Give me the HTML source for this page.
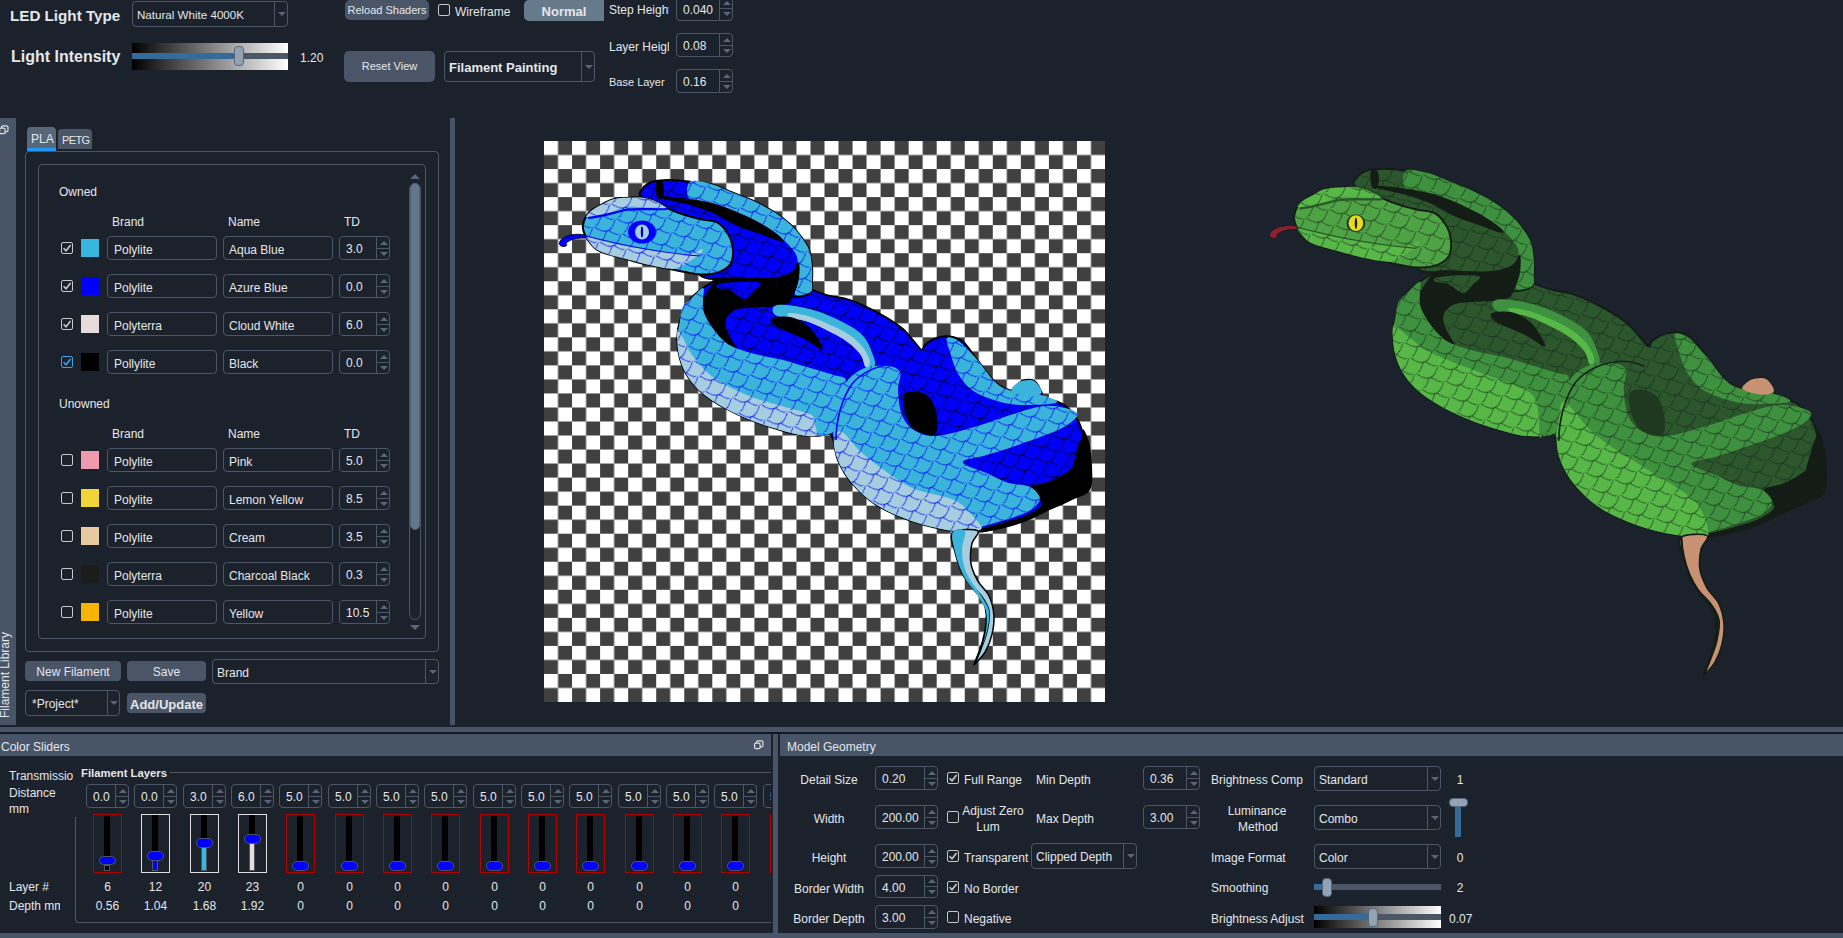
<!DOCTYPE html><html><head><meta charset="utf-8"><style>
html,body{margin:0;padding:0;}
body{width:1843px;height:938px;overflow:hidden;background:#1b222c;position:relative;font-family:"Liberation Sans",sans-serif;}
.a{position:absolute;}
.t{position:absolute;height:0;white-space:nowrap;line-height:0;}
.t span{position:absolute;left:0;bottom:0;line-height:1;display:block;transform:translateY(0.215em);}
.t.c span{left:0;right:0;text-align:center;}
</style></head><body>
<div class="t" style="left:10px;top:20px;font-size:15.2px;font-weight:700;color:#e4e6ea;"><span>LED Light Type</span></div>
<div class="a" style="left:132px;top:1px;width:156px;height:26px;border:1px solid #4b5667;border-radius:4px;box-sizing:border-box"></div>
<div class="a" style="left:274px;top:2px;width:1px;height:24px;background:#4b5667"></div>
<div class="a" style="left:277.5px;top:12.0px;width:0;height:0;border-left:4.0px solid transparent;border-right:4.0px solid transparent;border-top:4px solid #5a6677"></div>
<div class="t" style="left:137px;top:18.176000000000002px;font-size:11.6px;font-weight:400;color:#e4e6ea;"><span>Natural White 4000K</span></div>
<div class="t" style="left:11px;top:62px;font-size:16px;font-weight:700;color:#e4e6ea;"><span>Light Intensity</span></div>
<div class="a" style="left:132px;top:43px;width:156px;height:27px;background:linear-gradient(90deg,#000,#fff)"></div>
<div class="a" style="left:132px;top:53px;width:106px;height:6px;background:#346b9b"></div>
<div class="a" style="left:238px;top:53px;width:50px;height:6px;background:#4b5667"></div>
<div class="a" style="left:234px;top:46px;width:10px;height:20px;background:#93a3b4;border:1px solid #56677a;border-radius:4px;box-sizing:border-box"></div>
<div class="t" style="left:300px;top:61px;font-size:12px;font-weight:400;color:#e4e6ea;"><span>1.20</span></div>
<div class="a" style="left:345px;top:0px;width:84px;height:20px;background:#4a5568;border-radius:5px"></div>
<div class="t c" style="left:287.0px;top:13.96px;width:200px;font-size:11px;font-weight:400;color:#e4e6ea;"><span>Reload Shaders</span></div>
<div class="a" style="left:438px;top:4px;width:12px;height:12px;border:1.3px solid #c8c8c8;border-radius:2px;box-sizing:border-box"></div>
<div class="t" style="left:455px;top:15px;font-size:12px;font-weight:400;color:#e4e6ea;"><span>Wireframe</span></div>
<div class="a" style="left:524px;top:0px;width:80px;height:21px;background:#677a8c;border-radius:5px"></div>
<div class="t c" style="left:464.0px;top:15.18px;width:200px;font-size:13px;font-weight:700;color:#e4e6ea;"><span>Normal</span></div>
<div class="a" style="left:600px;top:0px;width:4px;height:21px;background:#677a8c"></div>
<div class="a" style="left:609px;top:0;width:60px;height:100px;overflow:hidden">
<div class="t" style="left:0px;top:13px;font-size:12px;font-weight:400;color:#e4e6ea;"><span>Step Height</span></div>
<div class="t" style="left:0px;top:49.5px;font-size:12px;font-weight:400;color:#e4e6ea;"><span>Layer Height</span></div>
<div class="t" style="left:0px;top:85.7px;font-size:11px;font-weight:400;color:#e4e6ea;"><span>Base Layer</span></div>
</div>
<div class="a" style="left:676px;top:-4px;width:57px;height:24.5px;border:1px solid #4b5667;border-radius:4px;box-sizing:border-box"></div>
<div class="a" style="left:719px;top:-3px;width:1px;height:22.5px;background:#4b5667"></div>
<div class="a" style="left:720px;top:7.75px;width:12px;height:1.0px;background:#4b5667"></div>
<div class="a" style="left:722.5px;top:0.625px;width:0;height:0;border-left:4.0px solid transparent;border-right:4.0px solid transparent;border-bottom:4px solid #5a6677"></div>
<div class="a" style="left:722.5px;top:11.875px;width:0;height:0;border-left:4.0px solid transparent;border-right:4.0px solid transparent;border-top:4px solid #5a6677"></div>
<div class="t" style="left:683px;top:13.3px;font-size:12px;font-weight:400;color:#e4e6ea;"><span>0.040</span></div>
<div class="a" style="left:676px;top:33px;width:57px;height:24px;border:1px solid #4b5667;border-radius:4px;box-sizing:border-box"></div>
<div class="a" style="left:719px;top:34px;width:1px;height:22px;background:#4b5667"></div>
<div class="a" style="left:720px;top:44.5px;width:12px;height:1.0px;background:#4b5667"></div>
<div class="a" style="left:722.5px;top:37.5px;width:0;height:0;border-left:4.0px solid transparent;border-right:4.0px solid transparent;border-bottom:4px solid #5a6677"></div>
<div class="a" style="left:722.5px;top:48.5px;width:0;height:0;border-left:4.0px solid transparent;border-right:4.0px solid transparent;border-top:4px solid #5a6677"></div>
<div class="t" style="left:683px;top:49.32px;font-size:12px;font-weight:400;color:#e4e6ea;"><span>0.08</span></div>
<div class="a" style="left:676px;top:69px;width:57px;height:24px;border:1px solid #4b5667;border-radius:4px;box-sizing:border-box"></div>
<div class="a" style="left:719px;top:70px;width:1px;height:22px;background:#4b5667"></div>
<div class="a" style="left:720px;top:80.5px;width:12px;height:1.0px;background:#4b5667"></div>
<div class="a" style="left:722.5px;top:73.5px;width:0;height:0;border-left:4.0px solid transparent;border-right:4.0px solid transparent;border-bottom:4px solid #5a6677"></div>
<div class="a" style="left:722.5px;top:84.5px;width:0;height:0;border-left:4.0px solid transparent;border-right:4.0px solid transparent;border-top:4px solid #5a6677"></div>
<div class="t" style="left:683px;top:85.32px;font-size:12px;font-weight:400;color:#e4e6ea;"><span>0.16</span></div>
<div class="a" style="left:344px;top:51px;width:91px;height:31px;background:#4a5568;border-radius:5px"></div>
<div class="t c" style="left:289.5px;top:70.46px;width:200px;font-size:11px;font-weight:400;color:#e4e6ea;"><span>Reset View</span></div>
<div class="a" style="left:444px;top:51px;width:151px;height:31px;border:1px solid #4b5667;border-radius:4px;box-sizing:border-box"></div>
<div class="a" style="left:581px;top:52px;width:1px;height:29px;background:#4b5667"></div>
<div class="a" style="left:584.5px;top:64.5px;width:0;height:0;border-left:4.0px solid transparent;border-right:4.0px solid transparent;border-top:4px solid #5a6677"></div>
<div class="t" style="left:449px;top:71.18px;font-size:13px;font-weight:700;color:#e4e6ea;"><span>Filament Painting</span></div>
<div class="a" style="left:0px;top:118px;width:16px;height:607px;background:#485467"></div>
<svg class="a" style="left:-1px;top:125px" width="10" height="10" viewBox="0 0 10 10"><rect x="2.5" y="0.8" width="6.5" height="6" rx="1.5" fill="none" stroke="#e0e0e0" stroke-width="1.2"/><rect x="0.6" y="3.2" width="5.5" height="5.5" rx="1.2" fill="#485467" stroke="#e0e0e0" stroke-width="1.2"/></svg>
<div class="a" style="left:-2px;top:718px;transform-origin:0 0;transform:rotate(-90deg);font-size:12px;color:#e4e6ea;white-space:nowrap;line-height:14px">Filament Library</div>
<div class="a" style="left:450px;top:118px;width:5px;height:607px;background:#485467"></div>
<div class="a" style="left:27px;top:127px;width:29px;height:24px;background:#566878;border-radius:4px 4px 0 0"></div>
<div class="a" style="left:27px;top:148px;width:29px;height:3px;background:#2196f3"></div>
<div class="t" style="left:31px;top:142px;font-size:12px;font-weight:400;color:#e4e6ea;"><span>PLA</span></div>
<div class="a" style="left:58px;top:129px;width:34px;height:20px;background:#4a5566;border-radius:4px 4px 0 0"></div>
<div class="t" style="left:62px;top:144px;font-size:11px;font-weight:400;color:#e4e6ea;letter-spacing:-0.6px"><span>PETG</span></div>
<div class="a" style="left:25px;top:151px;width:414px;height:501px;border:1px solid #4b5667;border-radius:4px;box-sizing:border-box"></div>
<div class="a" style="left:38px;top:164px;width:388px;height:475px;border:1px solid #4b5667;border-radius:4px;box-sizing:border-box"></div>
<div class="a" style="left:410.0px;top:174.0px;width:0;height:0;border-left:5.0px solid transparent;border-right:5.0px solid transparent;border-bottom:5px solid #5a6677"></div>
<div class="a" style="left:409px;top:183px;width:12px;height:437px;border:1px solid #4b5667;border-radius:6px;box-sizing:border-box"></div>
<div class="a" style="left:410px;top:183px;width:10px;height:347px;background:#627789;border-radius:5px;border:1px solid #4f6070;box-sizing:border-box"></div>
<div class="a" style="left:410.0px;top:624.5px;width:0;height:0;border-left:5.0px solid transparent;border-right:5.0px solid transparent;border-top:5px solid #5a6677"></div>
<div class="t" style="left:59px;top:195px;font-size:12px;font-weight:400;color:#e4e6ea;"><span>Owned</span></div>
<div class="t" style="left:59px;top:407px;font-size:12px;font-weight:400;color:#e4e6ea;"><span>Unowned</span></div>
<div class="t" style="left:112px;top:225px;font-size:12px;font-weight:400;color:#e4e6ea;"><span>Brand</span></div>
<div class="t" style="left:228px;top:225px;font-size:12px;font-weight:400;color:#e4e6ea;"><span>Name</span></div>
<div class="t" style="left:344px;top:225px;font-size:12px;font-weight:400;color:#e4e6ea;"><span>TD</span></div>
<div class="t" style="left:112px;top:437px;font-size:12px;font-weight:400;color:#e4e6ea;"><span>Brand</span></div>
<div class="t" style="left:228px;top:437px;font-size:12px;font-weight:400;color:#e4e6ea;"><span>Name</span></div>
<div class="t" style="left:344px;top:437px;font-size:12px;font-weight:400;color:#e4e6ea;"><span>TD</span></div>
<div class="a" style="left:61px;top:242px;width:12px;height:12px;border:1.3px solid #c8c8c8;border-radius:2px;box-sizing:border-box"></div>
<svg class="a" style="left:61px;top:242px" width="12" height="12" viewBox="0 0 12 12"><path d="M2.6 6.2 L5 8.8 L9.6 3" fill="none" stroke="#c8c8c8" stroke-width="1.6"/></svg>
<div class="a" style="left:81px;top:239px;width:18px;height:18px;background:#38b6dd"></div>
<div class="a" style="left:107px;top:236px;width:110px;height:24px;border:1px solid #4b5667;border-radius:4px;box-sizing:border-box"></div>
<div class="t" style="left:114px;top:252.5px;font-size:12px;font-weight:400;color:#e4e6ea;"><span>Polylite</span></div>
<div class="a" style="left:223px;top:236px;width:110px;height:24px;border:1px solid #4b5667;border-radius:4px;box-sizing:border-box"></div>
<div class="t" style="left:229px;top:252.5px;font-size:12px;font-weight:400;color:#e4e6ea;"><span>Aqua Blue</span></div>
<div class="a" style="left:339px;top:236px;width:51px;height:24px;border:1px solid #4b5667;border-radius:4px;box-sizing:border-box"></div>
<div class="a" style="left:376px;top:237px;width:1px;height:22px;background:#4b5667"></div>
<div class="a" style="left:377px;top:247.5px;width:12px;height:1.0px;background:#4b5667"></div>
<div class="a" style="left:379.5px;top:240.5px;width:0;height:0;border-left:4.0px solid transparent;border-right:4.0px solid transparent;border-bottom:4px solid #5a6677"></div>
<div class="a" style="left:379.5px;top:251.5px;width:0;height:0;border-left:4.0px solid transparent;border-right:4.0px solid transparent;border-top:4px solid #5a6677"></div>
<div class="t" style="left:346px;top:252.32px;font-size:12px;font-weight:400;color:#e4e6ea;"><span>3.0</span></div>
<div class="a" style="left:61px;top:280px;width:12px;height:12px;border:1.3px solid #c8c8c8;border-radius:2px;box-sizing:border-box"></div>
<svg class="a" style="left:61px;top:280px" width="12" height="12" viewBox="0 0 12 12"><path d="M2.6 6.2 L5 8.8 L9.6 3" fill="none" stroke="#c8c8c8" stroke-width="1.6"/></svg>
<div class="a" style="left:81px;top:277px;width:18px;height:18px;background:#0000ff"></div>
<div class="a" style="left:107px;top:274px;width:110px;height:24px;border:1px solid #4b5667;border-radius:4px;box-sizing:border-box"></div>
<div class="t" style="left:114px;top:290.5px;font-size:12px;font-weight:400;color:#e4e6ea;"><span>Polylite</span></div>
<div class="a" style="left:223px;top:274px;width:110px;height:24px;border:1px solid #4b5667;border-radius:4px;box-sizing:border-box"></div>
<div class="t" style="left:229px;top:290.5px;font-size:12px;font-weight:400;color:#e4e6ea;"><span>Azure Blue</span></div>
<div class="a" style="left:339px;top:274px;width:51px;height:24px;border:1px solid #4b5667;border-radius:4px;box-sizing:border-box"></div>
<div class="a" style="left:376px;top:275px;width:1px;height:22px;background:#4b5667"></div>
<div class="a" style="left:377px;top:285.5px;width:12px;height:1.0px;background:#4b5667"></div>
<div class="a" style="left:379.5px;top:278.5px;width:0;height:0;border-left:4.0px solid transparent;border-right:4.0px solid transparent;border-bottom:4px solid #5a6677"></div>
<div class="a" style="left:379.5px;top:289.5px;width:0;height:0;border-left:4.0px solid transparent;border-right:4.0px solid transparent;border-top:4px solid #5a6677"></div>
<div class="t" style="left:346px;top:290.32px;font-size:12px;font-weight:400;color:#e4e6ea;"><span>0.0</span></div>
<div class="a" style="left:61px;top:318px;width:12px;height:12px;border:1.3px solid #c8c8c8;border-radius:2px;box-sizing:border-box"></div>
<svg class="a" style="left:61px;top:318px" width="12" height="12" viewBox="0 0 12 12"><path d="M2.6 6.2 L5 8.8 L9.6 3" fill="none" stroke="#c8c8c8" stroke-width="1.6"/></svg>
<div class="a" style="left:81px;top:315px;width:18px;height:18px;background:#e8dcdb"></div>
<div class="a" style="left:107px;top:312px;width:110px;height:24px;border:1px solid #4b5667;border-radius:4px;box-sizing:border-box"></div>
<div class="t" style="left:114px;top:328.5px;font-size:12px;font-weight:400;color:#e4e6ea;"><span>Polyterra</span></div>
<div class="a" style="left:223px;top:312px;width:110px;height:24px;border:1px solid #4b5667;border-radius:4px;box-sizing:border-box"></div>
<div class="t" style="left:229px;top:328.5px;font-size:12px;font-weight:400;color:#e4e6ea;"><span>Cloud White</span></div>
<div class="a" style="left:339px;top:312px;width:51px;height:24px;border:1px solid #4b5667;border-radius:4px;box-sizing:border-box"></div>
<div class="a" style="left:376px;top:313px;width:1px;height:22px;background:#4b5667"></div>
<div class="a" style="left:377px;top:323.5px;width:12px;height:1.0px;background:#4b5667"></div>
<div class="a" style="left:379.5px;top:316.5px;width:0;height:0;border-left:4.0px solid transparent;border-right:4.0px solid transparent;border-bottom:4px solid #5a6677"></div>
<div class="a" style="left:379.5px;top:327.5px;width:0;height:0;border-left:4.0px solid transparent;border-right:4.0px solid transparent;border-top:4px solid #5a6677"></div>
<div class="t" style="left:346px;top:328.32px;font-size:12px;font-weight:400;color:#e4e6ea;"><span>6.0</span></div>
<div class="a" style="left:61px;top:356px;width:12px;height:12px;border:1.3px solid #3aa0e8;border-radius:2px;box-sizing:border-box"></div>
<svg class="a" style="left:61px;top:356px" width="12" height="12" viewBox="0 0 12 12"><path d="M2.6 6.2 L5 8.8 L9.6 3" fill="none" stroke="#3aa0e8" stroke-width="1.6"/></svg>
<div class="a" style="left:81px;top:353px;width:18px;height:18px;background:#000000"></div>
<div class="a" style="left:107px;top:350px;width:110px;height:24px;border:1px solid #4b5667;border-radius:4px;box-sizing:border-box"></div>
<div class="t" style="left:114px;top:366.5px;font-size:12px;font-weight:400;color:#e4e6ea;"><span>Pollylite</span></div>
<div class="a" style="left:223px;top:350px;width:110px;height:24px;border:1px solid #4b5667;border-radius:4px;box-sizing:border-box"></div>
<div class="t" style="left:229px;top:366.5px;font-size:12px;font-weight:400;color:#e4e6ea;"><span>Black</span></div>
<div class="a" style="left:339px;top:350px;width:51px;height:24px;border:1px solid #4b5667;border-radius:4px;box-sizing:border-box"></div>
<div class="a" style="left:376px;top:351px;width:1px;height:22px;background:#4b5667"></div>
<div class="a" style="left:377px;top:361.5px;width:12px;height:1.0px;background:#4b5667"></div>
<div class="a" style="left:379.5px;top:354.5px;width:0;height:0;border-left:4.0px solid transparent;border-right:4.0px solid transparent;border-bottom:4px solid #5a6677"></div>
<div class="a" style="left:379.5px;top:365.5px;width:0;height:0;border-left:4.0px solid transparent;border-right:4.0px solid transparent;border-top:4px solid #5a6677"></div>
<div class="t" style="left:346px;top:366.32px;font-size:12px;font-weight:400;color:#e4e6ea;"><span>0.0</span></div>
<div class="a" style="left:61px;top:454px;width:12px;height:12px;border:1.3px solid #c8c8c8;border-radius:2px;box-sizing:border-box"></div>
<div class="a" style="left:81px;top:451px;width:18px;height:18px;background:#f09ab0"></div>
<div class="a" style="left:107px;top:448px;width:110px;height:24px;border:1px solid #4b5667;border-radius:4px;box-sizing:border-box"></div>
<div class="t" style="left:114px;top:464.5px;font-size:12px;font-weight:400;color:#e4e6ea;"><span>Polylite</span></div>
<div class="a" style="left:223px;top:448px;width:110px;height:24px;border:1px solid #4b5667;border-radius:4px;box-sizing:border-box"></div>
<div class="t" style="left:229px;top:464.5px;font-size:12px;font-weight:400;color:#e4e6ea;"><span>Pink</span></div>
<div class="a" style="left:339px;top:448px;width:51px;height:24px;border:1px solid #4b5667;border-radius:4px;box-sizing:border-box"></div>
<div class="a" style="left:376px;top:449px;width:1px;height:22px;background:#4b5667"></div>
<div class="a" style="left:377px;top:459.5px;width:12px;height:1.0px;background:#4b5667"></div>
<div class="a" style="left:379.5px;top:452.5px;width:0;height:0;border-left:4.0px solid transparent;border-right:4.0px solid transparent;border-bottom:4px solid #5a6677"></div>
<div class="a" style="left:379.5px;top:463.5px;width:0;height:0;border-left:4.0px solid transparent;border-right:4.0px solid transparent;border-top:4px solid #5a6677"></div>
<div class="t" style="left:346px;top:464.32px;font-size:12px;font-weight:400;color:#e4e6ea;"><span>5.0</span></div>
<div class="a" style="left:61px;top:492px;width:12px;height:12px;border:1.3px solid #c8c8c8;border-radius:2px;box-sizing:border-box"></div>
<div class="a" style="left:81px;top:489px;width:18px;height:18px;background:#f3d33a"></div>
<div class="a" style="left:107px;top:486px;width:110px;height:24px;border:1px solid #4b5667;border-radius:4px;box-sizing:border-box"></div>
<div class="t" style="left:114px;top:502.5px;font-size:12px;font-weight:400;color:#e4e6ea;"><span>Polylite</span></div>
<div class="a" style="left:223px;top:486px;width:110px;height:24px;border:1px solid #4b5667;border-radius:4px;box-sizing:border-box"></div>
<div class="t" style="left:229px;top:502.5px;font-size:12px;font-weight:400;color:#e4e6ea;"><span>Lemon Yellow</span></div>
<div class="a" style="left:339px;top:486px;width:51px;height:24px;border:1px solid #4b5667;border-radius:4px;box-sizing:border-box"></div>
<div class="a" style="left:376px;top:487px;width:1px;height:22px;background:#4b5667"></div>
<div class="a" style="left:377px;top:497.5px;width:12px;height:1.0px;background:#4b5667"></div>
<div class="a" style="left:379.5px;top:490.5px;width:0;height:0;border-left:4.0px solid transparent;border-right:4.0px solid transparent;border-bottom:4px solid #5a6677"></div>
<div class="a" style="left:379.5px;top:501.5px;width:0;height:0;border-left:4.0px solid transparent;border-right:4.0px solid transparent;border-top:4px solid #5a6677"></div>
<div class="t" style="left:346px;top:502.32px;font-size:12px;font-weight:400;color:#e4e6ea;"><span>8.5</span></div>
<div class="a" style="left:61px;top:530px;width:12px;height:12px;border:1.3px solid #c8c8c8;border-radius:2px;box-sizing:border-box"></div>
<div class="a" style="left:81px;top:527px;width:18px;height:18px;background:#e8c9a0"></div>
<div class="a" style="left:107px;top:524px;width:110px;height:24px;border:1px solid #4b5667;border-radius:4px;box-sizing:border-box"></div>
<div class="t" style="left:114px;top:540.5px;font-size:12px;font-weight:400;color:#e4e6ea;"><span>Polylite</span></div>
<div class="a" style="left:223px;top:524px;width:110px;height:24px;border:1px solid #4b5667;border-radius:4px;box-sizing:border-box"></div>
<div class="t" style="left:229px;top:540.5px;font-size:12px;font-weight:400;color:#e4e6ea;"><span>Cream</span></div>
<div class="a" style="left:339px;top:524px;width:51px;height:24px;border:1px solid #4b5667;border-radius:4px;box-sizing:border-box"></div>
<div class="a" style="left:376px;top:525px;width:1px;height:22px;background:#4b5667"></div>
<div class="a" style="left:377px;top:535.5px;width:12px;height:1.0px;background:#4b5667"></div>
<div class="a" style="left:379.5px;top:528.5px;width:0;height:0;border-left:4.0px solid transparent;border-right:4.0px solid transparent;border-bottom:4px solid #5a6677"></div>
<div class="a" style="left:379.5px;top:539.5px;width:0;height:0;border-left:4.0px solid transparent;border-right:4.0px solid transparent;border-top:4px solid #5a6677"></div>
<div class="t" style="left:346px;top:540.32px;font-size:12px;font-weight:400;color:#e4e6ea;"><span>3.5</span></div>
<div class="a" style="left:61px;top:568px;width:12px;height:12px;border:1.3px solid #c8c8c8;border-radius:2px;box-sizing:border-box"></div>
<div class="a" style="left:81px;top:565px;width:18px;height:18px;background:#1c1c1c"></div>
<div class="a" style="left:107px;top:562px;width:110px;height:24px;border:1px solid #4b5667;border-radius:4px;box-sizing:border-box"></div>
<div class="t" style="left:114px;top:578.5px;font-size:12px;font-weight:400;color:#e4e6ea;"><span>Polyterra</span></div>
<div class="a" style="left:223px;top:562px;width:110px;height:24px;border:1px solid #4b5667;border-radius:4px;box-sizing:border-box"></div>
<div class="t" style="left:229px;top:578.5px;font-size:12px;font-weight:400;color:#e4e6ea;"><span>Charcoal Black</span></div>
<div class="a" style="left:339px;top:562px;width:51px;height:24px;border:1px solid #4b5667;border-radius:4px;box-sizing:border-box"></div>
<div class="a" style="left:376px;top:563px;width:1px;height:22px;background:#4b5667"></div>
<div class="a" style="left:377px;top:573.5px;width:12px;height:1.0px;background:#4b5667"></div>
<div class="a" style="left:379.5px;top:566.5px;width:0;height:0;border-left:4.0px solid transparent;border-right:4.0px solid transparent;border-bottom:4px solid #5a6677"></div>
<div class="a" style="left:379.5px;top:577.5px;width:0;height:0;border-left:4.0px solid transparent;border-right:4.0px solid transparent;border-top:4px solid #5a6677"></div>
<div class="t" style="left:346px;top:578.32px;font-size:12px;font-weight:400;color:#e4e6ea;"><span>0.3</span></div>
<div class="a" style="left:61px;top:606px;width:12px;height:12px;border:1.3px solid #c8c8c8;border-radius:2px;box-sizing:border-box"></div>
<div class="a" style="left:81px;top:603px;width:18px;height:18px;background:#f5b400"></div>
<div class="a" style="left:107px;top:600px;width:110px;height:24px;border:1px solid #4b5667;border-radius:4px;box-sizing:border-box"></div>
<div class="t" style="left:114px;top:616.5px;font-size:12px;font-weight:400;color:#e4e6ea;"><span>Polylite</span></div>
<div class="a" style="left:223px;top:600px;width:110px;height:24px;border:1px solid #4b5667;border-radius:4px;box-sizing:border-box"></div>
<div class="t" style="left:229px;top:616.5px;font-size:12px;font-weight:400;color:#e4e6ea;"><span>Yellow</span></div>
<div class="a" style="left:339px;top:600px;width:51px;height:24px;border:1px solid #4b5667;border-radius:4px;box-sizing:border-box"></div>
<div class="a" style="left:376px;top:601px;width:1px;height:22px;background:#4b5667"></div>
<div class="a" style="left:377px;top:611.5px;width:12px;height:1.0px;background:#4b5667"></div>
<div class="a" style="left:379.5px;top:604.5px;width:0;height:0;border-left:4.0px solid transparent;border-right:4.0px solid transparent;border-bottom:4px solid #5a6677"></div>
<div class="a" style="left:379.5px;top:615.5px;width:0;height:0;border-left:4.0px solid transparent;border-right:4.0px solid transparent;border-top:4px solid #5a6677"></div>
<div class="t" style="left:346px;top:616.32px;font-size:12px;font-weight:400;color:#e4e6ea;"><span>10.5</span></div>
<div class="a" style="left:25px;top:661px;width:96px;height:20px;background:#4a5568;border-radius:4px"></div>
<div class="t c" style="left:-27.0px;top:675.32px;width:200px;font-size:12px;font-weight:400;color:#e4e6ea;"><span>New Filament</span></div>
<div class="a" style="left:127px;top:661px;width:79px;height:20px;background:#4a5568;border-radius:4px"></div>
<div class="t c" style="left:66.5px;top:675.32px;width:200px;font-size:12px;font-weight:400;color:#e4e6ea;"><span>Save</span></div>
<div class="a" style="left:212px;top:659px;width:227px;height:25px;border:1px solid #4b5667;border-radius:4px;box-sizing:border-box"></div>
<div class="a" style="left:425px;top:660px;width:1px;height:23px;background:#4b5667"></div>
<div class="a" style="left:428.5px;top:669.5px;width:0;height:0;border-left:4.0px solid transparent;border-right:4.0px solid transparent;border-top:4px solid #5a6677"></div>
<div class="t" style="left:217px;top:675.82px;font-size:12px;font-weight:400;color:#e4e6ea;"><span>Brand</span></div>
<div class="a" style="left:25px;top:690px;width:95px;height:26px;border:1px solid #4b5667;border-radius:4px;box-sizing:border-box"></div>
<div class="a" style="left:107px;top:691px;width:1px;height:24px;background:#4b5667"></div>
<div class="a" style="left:110.0px;top:701.0px;width:0;height:0;border-left:4.0px solid transparent;border-right:4.0px solid transparent;border-top:4px solid #5a6677"></div>
<div class="t" style="left:32px;top:707.32px;font-size:12px;font-weight:400;color:#e4e6ea;"><span>*Project*</span></div>
<div class="a" style="left:127px;top:693px;width:79px;height:20px;background:#4a5568;border-radius:4px"></div>
<div class="t c" style="left:66.5px;top:707.68px;width:200px;font-size:13px;font-weight:700;color:#e4e6ea;"><span>Add/Update</span></div>
<div class="a" style="left:0px;top:727px;width:1843px;height:5px;background:#485467"></div>
<div class="a" style="left:0px;top:732px;width:1843px;height:2px;background:#141a22"></div>
<div class="a" style="left:0px;top:734px;width:771px;height:22px;background:#485467"></div>
<div class="a" style="left:773px;top:734px;width:5px;height:204px;background:#485467"></div>
<div class="a" style="left:780px;top:734px;width:1063px;height:22px;background:#485467"></div>
<div class="a" style="left:0px;top:933px;width:1843px;height:5px;background:#485467"></div>
<div class="t" style="left:1px;top:750px;font-size:12px;font-weight:400;color:#e4e6ea;"><span>Color Sliders</span></div>
<div class="t" style="left:787px;top:750px;font-size:12px;font-weight:400;color:#e4e6ea;"><span>Model Geometry</span></div>
<svg class="a" style="left:754px;top:740px" width="10" height="10" viewBox="0 0 10 10"><rect x="2.5" y="0.8" width="6.5" height="6" rx="1.5" fill="none" stroke="#e0e0e0" stroke-width="1.2"/><rect x="0.6" y="3.2" width="5.5" height="5.5" rx="1.2" fill="#485467" stroke="#e0e0e0" stroke-width="1.2"/></svg>
<div class="a" style="left:0;top:756px;width:73px;height:60px;overflow:hidden">
<div class="t" style="left:9px;top:23.4px;font-size:12px;font-weight:400;color:#e4e6ea;"><span>Transmission</span></div>
<div class="t" style="left:9px;top:39.6px;font-size:12px;font-weight:400;color:#e4e6ea;"><span>Distance</span></div>
<div class="t" style="left:9px;top:55.6px;font-size:12px;font-weight:400;color:#e4e6ea;"><span>mm</span></div>
</div>
<div class="a" style="left:0;top:870px;width:60px;height:60px;overflow:hidden">
<div class="t" style="left:9px;top:19.6px;font-size:12px;font-weight:400;color:#e4e6ea;"><span>Layer #</span></div>
<div class="t" style="left:9px;top:39px;font-size:12px;font-weight:400;color:#e4e6ea;"><span>Depth mm</span></div>
</div>
<div class="a" style="left:75px;top:772px;width:696px;height:151px;border:1px solid #4b5667;border-right:none;border-radius:4px 0 0 4px;box-sizing:border-box"></div>
<div class="a" style="left:74px;top:765px;width:96px;height:15px;background:#1b222c"></div>
<div class="a" style="left:74px;top:765px;width:2px;height:52px;background:#1b222c"></div>
<div class="t" style="left:81px;top:777px;font-size:11.3px;font-weight:700;color:#e4e6ea;"><span>Filament Layers</span></div>
<div class="a" style="left:0;top:756px;width:771px;height:177px;overflow:hidden">
<div class="a" style="left:86px;top:28px;width:43px;height:24px;border:1px solid #4b5667;border-radius:4px;box-sizing:border-box"></div>
<div class="a" style="left:115px;top:29px;width:1px;height:22px;background:#4b5667"></div>
<div class="a" style="left:116px;top:39.5px;width:12px;height:1.0px;background:#4b5667"></div>
<div class="a" style="left:118.5px;top:32.5px;width:0;height:0;border-left:4.0px solid transparent;border-right:4.0px solid transparent;border-bottom:4px solid #5a6677"></div>
<div class="a" style="left:118.5px;top:43.5px;width:0;height:0;border-left:4.0px solid transparent;border-right:4.0px solid transparent;border-top:4px solid #5a6677"></div>
<div class="t" style="left:93px;top:44.32px;font-size:12px;font-weight:400;color:#e4e6ea;"><span>0.0</span></div>
<div class="a" style="left:93px;top:58px;width:29px;height:59px;border:1.3px solid #b00000;box-sizing:border-box"></div>
<div class="a" style="left:104px;top:59px;width:6px;height:56px;background:#000"></div>
<div class="a" style="left:104px;top:108.5px;width:6px;height:6.5px;background:#000;border:1px solid #4b5667;box-sizing:border-box"></div>
<div class="a" style="left:98.5px;top:99.5px;width:17.5px;height:9.5px;background:#0000ff;border:1px solid #4b5667;border-radius:5px;box-sizing:border-box"></div>
<div class="t c" style="left:7.5px;top:133.79999999999995px;width:200px;font-size:12px;font-weight:400;color:#e4e6ea;"><span>6</span></div>
<div class="t c" style="left:7.5px;top:152.5px;width:200px;font-size:12px;font-weight:400;color:#e4e6ea;"><span>0.56</span></div>
<div class="a" style="left:134px;top:28px;width:43px;height:24px;border:1px solid #4b5667;border-radius:4px;box-sizing:border-box"></div>
<div class="a" style="left:163px;top:29px;width:1px;height:22px;background:#4b5667"></div>
<div class="a" style="left:164px;top:39.5px;width:12px;height:1.0px;background:#4b5667"></div>
<div class="a" style="left:166.5px;top:32.5px;width:0;height:0;border-left:4.0px solid transparent;border-right:4.0px solid transparent;border-bottom:4px solid #5a6677"></div>
<div class="a" style="left:166.5px;top:43.5px;width:0;height:0;border-left:4.0px solid transparent;border-right:4.0px solid transparent;border-top:4px solid #5a6677"></div>
<div class="t" style="left:141px;top:44.32px;font-size:12px;font-weight:400;color:#e4e6ea;"><span>0.0</span></div>
<div class="a" style="left:141px;top:58px;width:29px;height:59px;border:1.3px solid #e0e0e0;box-sizing:border-box"></div>
<div class="a" style="left:152px;top:59px;width:6px;height:56px;background:#000"></div>
<div class="a" style="left:152px;top:104px;width:6px;height:11px;background:#0000ff;border:1px solid #4b5667;box-sizing:border-box"></div>
<div class="a" style="left:146.5px;top:95px;width:17.5px;height:9.5px;background:#0000ff;border:1px solid #4b5667;border-radius:5px;box-sizing:border-box"></div>
<div class="t c" style="left:55.5px;top:133.79999999999995px;width:200px;font-size:12px;font-weight:400;color:#e4e6ea;"><span>12</span></div>
<div class="t c" style="left:55.5px;top:152.5px;width:200px;font-size:12px;font-weight:400;color:#e4e6ea;"><span>1.04</span></div>
<div class="a" style="left:183px;top:28px;width:43px;height:24px;border:1px solid #4b5667;border-radius:4px;box-sizing:border-box"></div>
<div class="a" style="left:212px;top:29px;width:1px;height:22px;background:#4b5667"></div>
<div class="a" style="left:213px;top:39.5px;width:12px;height:1.0px;background:#4b5667"></div>
<div class="a" style="left:215.5px;top:32.5px;width:0;height:0;border-left:4.0px solid transparent;border-right:4.0px solid transparent;border-bottom:4px solid #5a6677"></div>
<div class="a" style="left:215.5px;top:43.5px;width:0;height:0;border-left:4.0px solid transparent;border-right:4.0px solid transparent;border-top:4px solid #5a6677"></div>
<div class="t" style="left:190px;top:44.32px;font-size:12px;font-weight:400;color:#e4e6ea;"><span>3.0</span></div>
<div class="a" style="left:190px;top:58px;width:29px;height:59px;border:1.3px solid #e0e0e0;box-sizing:border-box"></div>
<div class="a" style="left:201px;top:59px;width:6px;height:56px;background:#000"></div>
<div class="a" style="left:201px;top:91px;width:6px;height:24px;background:#38b6dd;border:1px solid #4b5667;box-sizing:border-box"></div>
<div class="a" style="left:195.5px;top:82px;width:17.5px;height:9.5px;background:#0000ff;border:1px solid #4b5667;border-radius:5px;box-sizing:border-box"></div>
<div class="t c" style="left:104.5px;top:133.79999999999995px;width:200px;font-size:12px;font-weight:400;color:#e4e6ea;"><span>20</span></div>
<div class="t c" style="left:104.5px;top:152.5px;width:200px;font-size:12px;font-weight:400;color:#e4e6ea;"><span>1.68</span></div>
<div class="a" style="left:231px;top:28px;width:43px;height:24px;border:1px solid #4b5667;border-radius:4px;box-sizing:border-box"></div>
<div class="a" style="left:260px;top:29px;width:1px;height:22px;background:#4b5667"></div>
<div class="a" style="left:261px;top:39.5px;width:12px;height:1.0px;background:#4b5667"></div>
<div class="a" style="left:263.5px;top:32.5px;width:0;height:0;border-left:4.0px solid transparent;border-right:4.0px solid transparent;border-bottom:4px solid #5a6677"></div>
<div class="a" style="left:263.5px;top:43.5px;width:0;height:0;border-left:4.0px solid transparent;border-right:4.0px solid transparent;border-top:4px solid #5a6677"></div>
<div class="t" style="left:238px;top:44.32px;font-size:12px;font-weight:400;color:#e4e6ea;"><span>6.0</span></div>
<div class="a" style="left:238px;top:58px;width:29px;height:59px;border:1.3px solid #e0e0e0;box-sizing:border-box"></div>
<div class="a" style="left:249px;top:59px;width:6px;height:56px;background:#000"></div>
<div class="a" style="left:249px;top:87.39999999999998px;width:6px;height:27.600000000000023px;background:#e8dcdb;border:1px solid #4b5667;box-sizing:border-box"></div>
<div class="a" style="left:243.5px;top:78.39999999999998px;width:17.5px;height:9.5px;background:#0000ff;border:1px solid #4b5667;border-radius:5px;box-sizing:border-box"></div>
<div class="t c" style="left:152.5px;top:133.79999999999995px;width:200px;font-size:12px;font-weight:400;color:#e4e6ea;"><span>23</span></div>
<div class="t c" style="left:152.5px;top:152.5px;width:200px;font-size:12px;font-weight:400;color:#e4e6ea;"><span>1.92</span></div>
<div class="a" style="left:279px;top:28px;width:43px;height:24px;border:1px solid #4b5667;border-radius:4px;box-sizing:border-box"></div>
<div class="a" style="left:308px;top:29px;width:1px;height:22px;background:#4b5667"></div>
<div class="a" style="left:309px;top:39.5px;width:12px;height:1.0px;background:#4b5667"></div>
<div class="a" style="left:311.5px;top:32.5px;width:0;height:0;border-left:4.0px solid transparent;border-right:4.0px solid transparent;border-bottom:4px solid #5a6677"></div>
<div class="a" style="left:311.5px;top:43.5px;width:0;height:0;border-left:4.0px solid transparent;border-right:4.0px solid transparent;border-top:4px solid #5a6677"></div>
<div class="t" style="left:286px;top:44.32px;font-size:12px;font-weight:400;color:#e4e6ea;"><span>5.0</span></div>
<div class="a" style="left:286px;top:58px;width:29px;height:59px;border:1.3px solid #b00000;box-sizing:border-box"></div>
<div class="a" style="left:297px;top:59px;width:6px;height:56px;background:#000"></div>
<div class="a" style="left:291.5px;top:105px;width:17.5px;height:9.5px;background:#0000ff;border:1px solid #4b5667;border-radius:5px;box-sizing:border-box"></div>
<div class="t c" style="left:200.5px;top:133.79999999999995px;width:200px;font-size:12px;font-weight:400;color:#e4e6ea;"><span>0</span></div>
<div class="t c" style="left:200.5px;top:152.5px;width:200px;font-size:12px;font-weight:400;color:#e4e6ea;"><span>0</span></div>
<div class="a" style="left:328px;top:28px;width:43px;height:24px;border:1px solid #4b5667;border-radius:4px;box-sizing:border-box"></div>
<div class="a" style="left:357px;top:29px;width:1px;height:22px;background:#4b5667"></div>
<div class="a" style="left:358px;top:39.5px;width:12px;height:1.0px;background:#4b5667"></div>
<div class="a" style="left:360.5px;top:32.5px;width:0;height:0;border-left:4.0px solid transparent;border-right:4.0px solid transparent;border-bottom:4px solid #5a6677"></div>
<div class="a" style="left:360.5px;top:43.5px;width:0;height:0;border-left:4.0px solid transparent;border-right:4.0px solid transparent;border-top:4px solid #5a6677"></div>
<div class="t" style="left:335px;top:44.32px;font-size:12px;font-weight:400;color:#e4e6ea;"><span>5.0</span></div>
<div class="a" style="left:335px;top:58px;width:29px;height:59px;border:1.3px solid #b00000;box-sizing:border-box"></div>
<div class="a" style="left:346px;top:59px;width:6px;height:56px;background:#000"></div>
<div class="a" style="left:340.5px;top:105px;width:17.5px;height:9.5px;background:#0000ff;border:1px solid #4b5667;border-radius:5px;box-sizing:border-box"></div>
<div class="t c" style="left:249.5px;top:133.79999999999995px;width:200px;font-size:12px;font-weight:400;color:#e4e6ea;"><span>0</span></div>
<div class="t c" style="left:249.5px;top:152.5px;width:200px;font-size:12px;font-weight:400;color:#e4e6ea;"><span>0</span></div>
<div class="a" style="left:376px;top:28px;width:43px;height:24px;border:1px solid #4b5667;border-radius:4px;box-sizing:border-box"></div>
<div class="a" style="left:405px;top:29px;width:1px;height:22px;background:#4b5667"></div>
<div class="a" style="left:406px;top:39.5px;width:12px;height:1.0px;background:#4b5667"></div>
<div class="a" style="left:408.5px;top:32.5px;width:0;height:0;border-left:4.0px solid transparent;border-right:4.0px solid transparent;border-bottom:4px solid #5a6677"></div>
<div class="a" style="left:408.5px;top:43.5px;width:0;height:0;border-left:4.0px solid transparent;border-right:4.0px solid transparent;border-top:4px solid #5a6677"></div>
<div class="t" style="left:383px;top:44.32px;font-size:12px;font-weight:400;color:#e4e6ea;"><span>5.0</span></div>
<div class="a" style="left:383px;top:58px;width:29px;height:59px;border:1.3px solid #b00000;box-sizing:border-box"></div>
<div class="a" style="left:394px;top:59px;width:6px;height:56px;background:#000"></div>
<div class="a" style="left:388.5px;top:105px;width:17.5px;height:9.5px;background:#0000ff;border:1px solid #4b5667;border-radius:5px;box-sizing:border-box"></div>
<div class="t c" style="left:297.5px;top:133.79999999999995px;width:200px;font-size:12px;font-weight:400;color:#e4e6ea;"><span>0</span></div>
<div class="t c" style="left:297.5px;top:152.5px;width:200px;font-size:12px;font-weight:400;color:#e4e6ea;"><span>0</span></div>
<div class="a" style="left:424px;top:28px;width:43px;height:24px;border:1px solid #4b5667;border-radius:4px;box-sizing:border-box"></div>
<div class="a" style="left:453px;top:29px;width:1px;height:22px;background:#4b5667"></div>
<div class="a" style="left:454px;top:39.5px;width:12px;height:1.0px;background:#4b5667"></div>
<div class="a" style="left:456.5px;top:32.5px;width:0;height:0;border-left:4.0px solid transparent;border-right:4.0px solid transparent;border-bottom:4px solid #5a6677"></div>
<div class="a" style="left:456.5px;top:43.5px;width:0;height:0;border-left:4.0px solid transparent;border-right:4.0px solid transparent;border-top:4px solid #5a6677"></div>
<div class="t" style="left:431px;top:44.32px;font-size:12px;font-weight:400;color:#e4e6ea;"><span>5.0</span></div>
<div class="a" style="left:431px;top:58px;width:29px;height:59px;border:1.3px solid #b00000;box-sizing:border-box"></div>
<div class="a" style="left:442px;top:59px;width:6px;height:56px;background:#000"></div>
<div class="a" style="left:436.5px;top:105px;width:17.5px;height:9.5px;background:#0000ff;border:1px solid #4b5667;border-radius:5px;box-sizing:border-box"></div>
<div class="t c" style="left:345.5px;top:133.79999999999995px;width:200px;font-size:12px;font-weight:400;color:#e4e6ea;"><span>0</span></div>
<div class="t c" style="left:345.5px;top:152.5px;width:200px;font-size:12px;font-weight:400;color:#e4e6ea;"><span>0</span></div>
<div class="a" style="left:473px;top:28px;width:43px;height:24px;border:1px solid #4b5667;border-radius:4px;box-sizing:border-box"></div>
<div class="a" style="left:502px;top:29px;width:1px;height:22px;background:#4b5667"></div>
<div class="a" style="left:503px;top:39.5px;width:12px;height:1.0px;background:#4b5667"></div>
<div class="a" style="left:505.5px;top:32.5px;width:0;height:0;border-left:4.0px solid transparent;border-right:4.0px solid transparent;border-bottom:4px solid #5a6677"></div>
<div class="a" style="left:505.5px;top:43.5px;width:0;height:0;border-left:4.0px solid transparent;border-right:4.0px solid transparent;border-top:4px solid #5a6677"></div>
<div class="t" style="left:480px;top:44.32px;font-size:12px;font-weight:400;color:#e4e6ea;"><span>5.0</span></div>
<div class="a" style="left:480px;top:58px;width:29px;height:59px;border:1.3px solid #b00000;box-sizing:border-box"></div>
<div class="a" style="left:491px;top:59px;width:6px;height:56px;background:#000"></div>
<div class="a" style="left:485.5px;top:105px;width:17.5px;height:9.5px;background:#0000ff;border:1px solid #4b5667;border-radius:5px;box-sizing:border-box"></div>
<div class="t c" style="left:394.5px;top:133.79999999999995px;width:200px;font-size:12px;font-weight:400;color:#e4e6ea;"><span>0</span></div>
<div class="t c" style="left:394.5px;top:152.5px;width:200px;font-size:12px;font-weight:400;color:#e4e6ea;"><span>0</span></div>
<div class="a" style="left:521px;top:28px;width:43px;height:24px;border:1px solid #4b5667;border-radius:4px;box-sizing:border-box"></div>
<div class="a" style="left:550px;top:29px;width:1px;height:22px;background:#4b5667"></div>
<div class="a" style="left:551px;top:39.5px;width:12px;height:1.0px;background:#4b5667"></div>
<div class="a" style="left:553.5px;top:32.5px;width:0;height:0;border-left:4.0px solid transparent;border-right:4.0px solid transparent;border-bottom:4px solid #5a6677"></div>
<div class="a" style="left:553.5px;top:43.5px;width:0;height:0;border-left:4.0px solid transparent;border-right:4.0px solid transparent;border-top:4px solid #5a6677"></div>
<div class="t" style="left:528px;top:44.32px;font-size:12px;font-weight:400;color:#e4e6ea;"><span>5.0</span></div>
<div class="a" style="left:528px;top:58px;width:29px;height:59px;border:1.3px solid #b00000;box-sizing:border-box"></div>
<div class="a" style="left:539px;top:59px;width:6px;height:56px;background:#000"></div>
<div class="a" style="left:533.5px;top:105px;width:17.5px;height:9.5px;background:#0000ff;border:1px solid #4b5667;border-radius:5px;box-sizing:border-box"></div>
<div class="t c" style="left:442.5px;top:133.79999999999995px;width:200px;font-size:12px;font-weight:400;color:#e4e6ea;"><span>0</span></div>
<div class="t c" style="left:442.5px;top:152.5px;width:200px;font-size:12px;font-weight:400;color:#e4e6ea;"><span>0</span></div>
<div class="a" style="left:569px;top:28px;width:43px;height:24px;border:1px solid #4b5667;border-radius:4px;box-sizing:border-box"></div>
<div class="a" style="left:598px;top:29px;width:1px;height:22px;background:#4b5667"></div>
<div class="a" style="left:599px;top:39.5px;width:12px;height:1.0px;background:#4b5667"></div>
<div class="a" style="left:601.5px;top:32.5px;width:0;height:0;border-left:4.0px solid transparent;border-right:4.0px solid transparent;border-bottom:4px solid #5a6677"></div>
<div class="a" style="left:601.5px;top:43.5px;width:0;height:0;border-left:4.0px solid transparent;border-right:4.0px solid transparent;border-top:4px solid #5a6677"></div>
<div class="t" style="left:576px;top:44.32px;font-size:12px;font-weight:400;color:#e4e6ea;"><span>5.0</span></div>
<div class="a" style="left:576px;top:58px;width:29px;height:59px;border:1.3px solid #b00000;box-sizing:border-box"></div>
<div class="a" style="left:587px;top:59px;width:6px;height:56px;background:#000"></div>
<div class="a" style="left:581.5px;top:105px;width:17.5px;height:9.5px;background:#0000ff;border:1px solid #4b5667;border-radius:5px;box-sizing:border-box"></div>
<div class="t c" style="left:490.5px;top:133.79999999999995px;width:200px;font-size:12px;font-weight:400;color:#e4e6ea;"><span>0</span></div>
<div class="t c" style="left:490.5px;top:152.5px;width:200px;font-size:12px;font-weight:400;color:#e4e6ea;"><span>0</span></div>
<div class="a" style="left:618px;top:28px;width:43px;height:24px;border:1px solid #4b5667;border-radius:4px;box-sizing:border-box"></div>
<div class="a" style="left:647px;top:29px;width:1px;height:22px;background:#4b5667"></div>
<div class="a" style="left:648px;top:39.5px;width:12px;height:1.0px;background:#4b5667"></div>
<div class="a" style="left:650.5px;top:32.5px;width:0;height:0;border-left:4.0px solid transparent;border-right:4.0px solid transparent;border-bottom:4px solid #5a6677"></div>
<div class="a" style="left:650.5px;top:43.5px;width:0;height:0;border-left:4.0px solid transparent;border-right:4.0px solid transparent;border-top:4px solid #5a6677"></div>
<div class="t" style="left:625px;top:44.32px;font-size:12px;font-weight:400;color:#e4e6ea;"><span>5.0</span></div>
<div class="a" style="left:625px;top:58px;width:29px;height:59px;border:1.3px solid #b00000;box-sizing:border-box"></div>
<div class="a" style="left:636px;top:59px;width:6px;height:56px;background:#000"></div>
<div class="a" style="left:630.5px;top:105px;width:17.5px;height:9.5px;background:#0000ff;border:1px solid #4b5667;border-radius:5px;box-sizing:border-box"></div>
<div class="t c" style="left:539.5px;top:133.79999999999995px;width:200px;font-size:12px;font-weight:400;color:#e4e6ea;"><span>0</span></div>
<div class="t c" style="left:539.5px;top:152.5px;width:200px;font-size:12px;font-weight:400;color:#e4e6ea;"><span>0</span></div>
<div class="a" style="left:666px;top:28px;width:43px;height:24px;border:1px solid #4b5667;border-radius:4px;box-sizing:border-box"></div>
<div class="a" style="left:695px;top:29px;width:1px;height:22px;background:#4b5667"></div>
<div class="a" style="left:696px;top:39.5px;width:12px;height:1.0px;background:#4b5667"></div>
<div class="a" style="left:698.5px;top:32.5px;width:0;height:0;border-left:4.0px solid transparent;border-right:4.0px solid transparent;border-bottom:4px solid #5a6677"></div>
<div class="a" style="left:698.5px;top:43.5px;width:0;height:0;border-left:4.0px solid transparent;border-right:4.0px solid transparent;border-top:4px solid #5a6677"></div>
<div class="t" style="left:673px;top:44.32px;font-size:12px;font-weight:400;color:#e4e6ea;"><span>5.0</span></div>
<div class="a" style="left:673px;top:58px;width:29px;height:59px;border:1.3px solid #b00000;box-sizing:border-box"></div>
<div class="a" style="left:684px;top:59px;width:6px;height:56px;background:#000"></div>
<div class="a" style="left:678.5px;top:105px;width:17.5px;height:9.5px;background:#0000ff;border:1px solid #4b5667;border-radius:5px;box-sizing:border-box"></div>
<div class="t c" style="left:587.5px;top:133.79999999999995px;width:200px;font-size:12px;font-weight:400;color:#e4e6ea;"><span>0</span></div>
<div class="t c" style="left:587.5px;top:152.5px;width:200px;font-size:12px;font-weight:400;color:#e4e6ea;"><span>0</span></div>
<div class="a" style="left:714px;top:28px;width:43px;height:24px;border:1px solid #4b5667;border-radius:4px;box-sizing:border-box"></div>
<div class="a" style="left:743px;top:29px;width:1px;height:22px;background:#4b5667"></div>
<div class="a" style="left:744px;top:39.5px;width:12px;height:1.0px;background:#4b5667"></div>
<div class="a" style="left:746.5px;top:32.5px;width:0;height:0;border-left:4.0px solid transparent;border-right:4.0px solid transparent;border-bottom:4px solid #5a6677"></div>
<div class="a" style="left:746.5px;top:43.5px;width:0;height:0;border-left:4.0px solid transparent;border-right:4.0px solid transparent;border-top:4px solid #5a6677"></div>
<div class="t" style="left:721px;top:44.32px;font-size:12px;font-weight:400;color:#e4e6ea;"><span>5.0</span></div>
<div class="a" style="left:721px;top:58px;width:29px;height:59px;border:1.3px solid #b00000;box-sizing:border-box"></div>
<div class="a" style="left:732px;top:59px;width:6px;height:56px;background:#000"></div>
<div class="a" style="left:726.5px;top:105px;width:17.5px;height:9.5px;background:#0000ff;border:1px solid #4b5667;border-radius:5px;box-sizing:border-box"></div>
<div class="t c" style="left:635.5px;top:133.79999999999995px;width:200px;font-size:12px;font-weight:400;color:#e4e6ea;"><span>0</span></div>
<div class="t c" style="left:635.5px;top:152.5px;width:200px;font-size:12px;font-weight:400;color:#e4e6ea;"><span>0</span></div>
<div class="a" style="left:763px;top:28px;width:43px;height:24px;border:1px solid #4b5667;border-radius:4px;box-sizing:border-box"></div>
<div class="a" style="left:792px;top:29px;width:1px;height:22px;background:#4b5667"></div>
<div class="a" style="left:793px;top:39.5px;width:12px;height:1.0px;background:#4b5667"></div>
<div class="a" style="left:795.5px;top:32.5px;width:0;height:0;border-left:4.0px solid transparent;border-right:4.0px solid transparent;border-bottom:4px solid #5a6677"></div>
<div class="a" style="left:795.5px;top:43.5px;width:0;height:0;border-left:4.0px solid transparent;border-right:4.0px solid transparent;border-top:4px solid #5a6677"></div>
<div class="t" style="left:770px;top:44.32px;font-size:12px;font-weight:400;color:#e4e6ea;"><span>5.0</span></div>
<div class="a" style="left:770px;top:58px;width:29px;height:59px;border:1.3px solid #b00000;box-sizing:border-box"></div>
<div class="a" style="left:781px;top:59px;width:6px;height:56px;background:#000"></div>
<div class="a" style="left:775.5px;top:105px;width:17.5px;height:9.5px;background:#0000ff;border:1px solid #4b5667;border-radius:5px;box-sizing:border-box"></div>
<div class="t c" style="left:684.5px;top:133.79999999999995px;width:200px;font-size:12px;font-weight:400;color:#e4e6ea;"><span>0</span></div>
<div class="t c" style="left:684.5px;top:152.5px;width:200px;font-size:12px;font-weight:400;color:#e4e6ea;"><span>0</span></div>
</div>
<div class="t c" style="left:729px;top:782.6px;width:200px;font-size:12px;font-weight:400;color:#e4e6ea;"><span>Detail Size</span></div>
<div class="a" style="left:875px;top:766px;width:63px;height:24px;border:1px solid #4b5667;border-radius:4px;box-sizing:border-box"></div>
<div class="a" style="left:924px;top:767px;width:1px;height:22px;background:#4b5667"></div>
<div class="a" style="left:925px;top:777.5px;width:12px;height:1.0px;background:#4b5667"></div>
<div class="a" style="left:927.5px;top:770.5px;width:0;height:0;border-left:4.0px solid transparent;border-right:4.0px solid transparent;border-bottom:4px solid #5a6677"></div>
<div class="a" style="left:927.5px;top:781.5px;width:0;height:0;border-left:4.0px solid transparent;border-right:4.0px solid transparent;border-top:4px solid #5a6677"></div>
<div class="t" style="left:882px;top:782.32px;font-size:12px;font-weight:400;color:#e4e6ea;"><span>0.20</span></div>
<div class="a" style="left:947px;top:772px;width:12px;height:12px;border:1.3px solid #c8c8c8;border-radius:2px;box-sizing:border-box"></div>
<svg class="a" style="left:947px;top:772px" width="12" height="12" viewBox="0 0 12 12"><path d="M2.6 6.2 L5 8.8 L9.6 3" fill="none" stroke="#c8c8c8" stroke-width="1.6"/></svg>
<div class="t" style="left:964px;top:782.6px;font-size:12px;font-weight:400;color:#e4e6ea;"><span>Full Range</span></div>
<div class="t c" style="left:729px;top:821.6px;width:200px;font-size:12px;font-weight:400;color:#e4e6ea;"><span>Width</span></div>
<div class="a" style="left:875px;top:805px;width:63px;height:24px;border:1px solid #4b5667;border-radius:4px;box-sizing:border-box"></div>
<div class="a" style="left:924px;top:806px;width:1px;height:22px;background:#4b5667"></div>
<div class="a" style="left:925px;top:816.5px;width:12px;height:1.0px;background:#4b5667"></div>
<div class="a" style="left:927.5px;top:809.5px;width:0;height:0;border-left:4.0px solid transparent;border-right:4.0px solid transparent;border-bottom:4px solid #5a6677"></div>
<div class="a" style="left:927.5px;top:820.5px;width:0;height:0;border-left:4.0px solid transparent;border-right:4.0px solid transparent;border-top:4px solid #5a6677"></div>
<div class="t" style="left:882px;top:821.32px;font-size:12px;font-weight:400;color:#e4e6ea;"><span>200.00</span></div>
<div class="a" style="left:947px;top:811px;width:12px;height:12px;border:1.3px solid #c8c8c8;border-radius:2px;box-sizing:border-box"></div>
<div class="t c" style="left:729px;top:860.6px;width:200px;font-size:12px;font-weight:400;color:#e4e6ea;"><span>Height</span></div>
<div class="a" style="left:875px;top:844px;width:63px;height:24px;border:1px solid #4b5667;border-radius:4px;box-sizing:border-box"></div>
<div class="a" style="left:924px;top:845px;width:1px;height:22px;background:#4b5667"></div>
<div class="a" style="left:925px;top:855.5px;width:12px;height:1.0px;background:#4b5667"></div>
<div class="a" style="left:927.5px;top:848.5px;width:0;height:0;border-left:4.0px solid transparent;border-right:4.0px solid transparent;border-bottom:4px solid #5a6677"></div>
<div class="a" style="left:927.5px;top:859.5px;width:0;height:0;border-left:4.0px solid transparent;border-right:4.0px solid transparent;border-top:4px solid #5a6677"></div>
<div class="t" style="left:882px;top:860.32px;font-size:12px;font-weight:400;color:#e4e6ea;"><span>200.00</span></div>
<div class="a" style="left:947px;top:850px;width:12px;height:12px;border:1.3px solid #c8c8c8;border-radius:2px;box-sizing:border-box"></div>
<svg class="a" style="left:947px;top:850px" width="12" height="12" viewBox="0 0 12 12"><path d="M2.6 6.2 L5 8.8 L9.6 3" fill="none" stroke="#c8c8c8" stroke-width="1.6"/></svg>
<div class="t" style="left:964px;top:860.6px;font-size:12px;font-weight:400;color:#e4e6ea;"><span>Transparent</span></div>
<div class="t c" style="left:729px;top:891.6px;width:200px;font-size:12px;font-weight:400;color:#e4e6ea;"><span>Border Width</span></div>
<div class="a" style="left:875px;top:875px;width:63px;height:23px;border:1px solid #4b5667;border-radius:4px;box-sizing:border-box"></div>
<div class="a" style="left:924px;top:876px;width:1px;height:21px;background:#4b5667"></div>
<div class="a" style="left:925px;top:886.0px;width:12px;height:1.0px;background:#4b5667"></div>
<div class="a" style="left:927.5px;top:879.25px;width:0;height:0;border-left:4.0px solid transparent;border-right:4.0px solid transparent;border-bottom:4px solid #5a6677"></div>
<div class="a" style="left:927.5px;top:889.75px;width:0;height:0;border-left:4.0px solid transparent;border-right:4.0px solid transparent;border-top:4px solid #5a6677"></div>
<div class="t" style="left:882px;top:890.82px;font-size:12px;font-weight:400;color:#e4e6ea;"><span>4.00</span></div>
<div class="a" style="left:947px;top:881px;width:12px;height:12px;border:1.3px solid #c8c8c8;border-radius:2px;box-sizing:border-box"></div>
<svg class="a" style="left:947px;top:881px" width="12" height="12" viewBox="0 0 12 12"><path d="M2.6 6.2 L5 8.8 L9.6 3" fill="none" stroke="#c8c8c8" stroke-width="1.6"/></svg>
<div class="t" style="left:964px;top:891.6px;font-size:12px;font-weight:400;color:#e4e6ea;"><span>No Border</span></div>
<div class="t c" style="left:729px;top:921.6px;width:200px;font-size:12px;font-weight:400;color:#e4e6ea;"><span>Border Depth</span></div>
<div class="a" style="left:875px;top:905px;width:63px;height:24px;border:1px solid #4b5667;border-radius:4px;box-sizing:border-box"></div>
<div class="a" style="left:924px;top:906px;width:1px;height:22px;background:#4b5667"></div>
<div class="a" style="left:925px;top:916.5px;width:12px;height:1.0px;background:#4b5667"></div>
<div class="a" style="left:927.5px;top:909.5px;width:0;height:0;border-left:4.0px solid transparent;border-right:4.0px solid transparent;border-bottom:4px solid #5a6677"></div>
<div class="a" style="left:927.5px;top:920.5px;width:0;height:0;border-left:4.0px solid transparent;border-right:4.0px solid transparent;border-top:4px solid #5a6677"></div>
<div class="t" style="left:882px;top:921.32px;font-size:12px;font-weight:400;color:#e4e6ea;"><span>3.00</span></div>
<div class="a" style="left:947px;top:911px;width:12px;height:12px;border:1.3px solid #c8c8c8;border-radius:2px;box-sizing:border-box"></div>
<div class="t" style="left:964px;top:921.6px;font-size:12px;font-weight:400;color:#e4e6ea;"><span>Negative</span></div>
<div class="t c" style="left:893px;top:814px;width:200px;font-size:12px;font-weight:400;color:#e4e6ea;"><span>Adjust Zero</span></div>
<div class="t c" style="left:888px;top:830px;width:200px;font-size:12px;font-weight:400;color:#e4e6ea;"><span>Lum</span></div>
<div class="t" style="left:1036px;top:783px;font-size:12px;font-weight:400;color:#e4e6ea;"><span>Min Depth</span></div>
<div class="a" style="left:1143px;top:766px;width:57px;height:24px;border:1px solid #4b5667;border-radius:4px;box-sizing:border-box"></div>
<div class="a" style="left:1186px;top:767px;width:1px;height:22px;background:#4b5667"></div>
<div class="a" style="left:1187px;top:777.5px;width:12px;height:1.0px;background:#4b5667"></div>
<div class="a" style="left:1189.5px;top:770.5px;width:0;height:0;border-left:4.0px solid transparent;border-right:4.0px solid transparent;border-bottom:4px solid #5a6677"></div>
<div class="a" style="left:1189.5px;top:781.5px;width:0;height:0;border-left:4.0px solid transparent;border-right:4.0px solid transparent;border-top:4px solid #5a6677"></div>
<div class="t" style="left:1150px;top:782.32px;font-size:12px;font-weight:400;color:#e4e6ea;"><span>0.36</span></div>
<div class="t" style="left:1036px;top:822px;font-size:12px;font-weight:400;color:#e4e6ea;"><span>Max Depth</span></div>
<div class="a" style="left:1143px;top:805px;width:57px;height:24px;border:1px solid #4b5667;border-radius:4px;box-sizing:border-box"></div>
<div class="a" style="left:1186px;top:806px;width:1px;height:22px;background:#4b5667"></div>
<div class="a" style="left:1187px;top:816.5px;width:12px;height:1.0px;background:#4b5667"></div>
<div class="a" style="left:1189.5px;top:809.5px;width:0;height:0;border-left:4.0px solid transparent;border-right:4.0px solid transparent;border-bottom:4px solid #5a6677"></div>
<div class="a" style="left:1189.5px;top:820.5px;width:0;height:0;border-left:4.0px solid transparent;border-right:4.0px solid transparent;border-top:4px solid #5a6677"></div>
<div class="t" style="left:1150px;top:821.32px;font-size:12px;font-weight:400;color:#e4e6ea;"><span>3.00</span></div>
<div class="a" style="left:1031px;top:843px;width:106px;height:26px;border:1px solid #4b5667;border-radius:4px;box-sizing:border-box"></div>
<div class="a" style="left:1123px;top:844px;width:1px;height:24px;background:#4b5667"></div>
<div class="a" style="left:1126.5px;top:854.0px;width:0;height:0;border-left:4.0px solid transparent;border-right:4.0px solid transparent;border-top:4px solid #5a6677"></div>
<div class="t" style="left:1036px;top:860.32px;font-size:12px;font-weight:400;color:#e4e6ea;"><span>Clipped Depth</span></div>
<div class="t" style="left:1211px;top:783px;font-size:12px;font-weight:400;color:#e4e6ea;"><span>Brightness Comp</span></div>
<div class="t c" style="left:1157px;top:814px;width:200px;font-size:12px;font-weight:400;color:#e4e6ea;"><span>Luminance</span></div>
<div class="t c" style="left:1158px;top:830px;width:200px;font-size:12px;font-weight:400;color:#e4e6ea;"><span>Method</span></div>
<div class="t" style="left:1211px;top:861px;font-size:12px;font-weight:400;color:#e4e6ea;"><span>Image Format</span></div>
<div class="t" style="left:1211px;top:891px;font-size:12px;font-weight:400;color:#e4e6ea;"><span>Smoothing</span></div>
<div class="t" style="left:1211px;top:922px;font-size:12px;font-weight:400;color:#e4e6ea;"><span>Brightness Adjust</span></div>
<div class="a" style="left:1314px;top:766px;width:127px;height:25px;border:1px solid #4b5667;border-radius:4px;box-sizing:border-box"></div>
<div class="a" style="left:1427px;top:767px;width:1px;height:23px;background:#4b5667"></div>
<div class="a" style="left:1430.5px;top:776.5px;width:0;height:0;border-left:4.0px solid transparent;border-right:4.0px solid transparent;border-top:4px solid #5a6677"></div>
<div class="t" style="left:1319px;top:782.82px;font-size:12px;font-weight:400;color:#e4e6ea;"><span>Standard</span></div>
<div class="a" style="left:1314px;top:805px;width:127px;height:25px;border:1px solid #4b5667;border-radius:4px;box-sizing:border-box"></div>
<div class="a" style="left:1427px;top:806px;width:1px;height:23px;background:#4b5667"></div>
<div class="a" style="left:1430.5px;top:815.5px;width:0;height:0;border-left:4.0px solid transparent;border-right:4.0px solid transparent;border-top:4px solid #5a6677"></div>
<div class="t" style="left:1319px;top:821.82px;font-size:12px;font-weight:400;color:#e4e6ea;"><span>Combo</span></div>
<div class="a" style="left:1314px;top:844px;width:127px;height:25px;border:1px solid #4b5667;border-radius:4px;box-sizing:border-box"></div>
<div class="a" style="left:1427px;top:845px;width:1px;height:23px;background:#4b5667"></div>
<div class="a" style="left:1430.5px;top:854.5px;width:0;height:0;border-left:4.0px solid transparent;border-right:4.0px solid transparent;border-top:4px solid #5a6677"></div>
<div class="t" style="left:1319px;top:860.82px;font-size:12px;font-weight:400;color:#e4e6ea;"><span>Color</span></div>
<div class="t c" style="left:1360px;top:783px;width:200px;font-size:12px;font-weight:400;color:#e4e6ea;"><span>1</span></div>
<div class="t c" style="left:1360px;top:861px;width:200px;font-size:12px;font-weight:400;color:#e4e6ea;"><span>0</span></div>
<div class="t c" style="left:1360px;top:891px;width:200px;font-size:12px;font-weight:400;color:#e4e6ea;"><span>2</span></div>
<div class="t" style="left:1449px;top:922px;font-size:12px;font-weight:400;color:#e4e6ea;"><span>0.07</span></div>
<div class="a" style="left:1455px;top:800px;width:6px;height:37px;background:#346b9b"></div>
<div class="a" style="left:1449px;top:798px;width:19px;height:9px;background:#93a3b4;border:1px solid #56677a;border-radius:4px;box-sizing:border-box"></div>
<div class="a" style="left:1314px;top:884px;width:127px;height:6px;background:#4b5667"></div>
<div class="a" style="left:1314px;top:884px;width:12px;height:6px;background:#346b9b"></div>
<div class="a" style="left:1322px;top:877.5px;width:10px;height:19.0px;background:#93a3b4;border:1px solid #56677a;border-radius:4px;box-sizing:border-box"></div>
<div class="a" style="left:1314px;top:906px;width:127px;height:22px;background:linear-gradient(90deg,#000,#fff)"></div>
<div class="a" style="left:1314px;top:914px;width:59px;height:6px;background:#346b9b"></div>
<div class="a" style="left:1373px;top:914px;width:68px;height:6px;background:#4b5667"></div>
<div class="a" style="left:1368px;top:907.5px;width:10px;height:19.0px;background:#93a3b4;border:1px solid #56677a;border-radius:4px;box-sizing:border-box"></div>
<svg class="a" style="left:544px;top:141px" width="561" height="561"><defs><pattern id="chk" width="28.05" height="28.05" patternUnits="userSpaceOnUse"><rect width="28.05" height="28.05" fill="#fff"/><rect x="14.025" width="14.025" height="14.025" fill="#404040"/><rect y="14.025" width="14.025" height="14.025" fill="#404040"/></pattern></defs><rect width="561" height="561" fill="url(#chk)"/></svg>
<svg class="a" style="left:0;top:0" width="1843" height="938" viewBox="0 0 1843 938"><g><defs><pattern id="pba" width="24" height="16" patternUnits="userSpaceOnUse" patternTransform="rotate(-20)"><path d="M1,0.5 Q12,17 23,0.5 M-11,8.5 Q0,25 11,8.5 M13,8.5 Q24,25 35,8.5" fill="none" stroke="#0000ff" stroke-width="0.9" opacity="1"/></pattern><pattern id="pbb" width="24" height="16" patternUnits="userSpaceOnUse" patternTransform="rotate(-20)"><path d="M1,0.5 Q12,17 23,0.5 M-11,8.5 Q0,25 11,8.5 M13,8.5 Q24,25 35,8.5" fill="none" stroke="#000000" stroke-width="0.9" opacity="1"/></pattern></defs>
<path d="M1082.0,430.0 C1083.5,426.3 1087.3,436.0 1089.0,442.0 C1090.7,448.0 1091.8,458.0 1092.0,466.0 C1092.2,474.0 1093.3,484.3 1090.0,490.0 C1086.7,495.7 1079.5,496.3 1072.0,500.0 C1064.5,503.7 1053.7,508.5 1045.0,512.0 C1036.3,515.5 1027.7,518.3 1020.0,521.0 C1012.3,523.7 1005.5,526.2 999.0,528.0 C992.5,529.8 984.0,533.0 981.0,532.0 C978.0,531.0 972.0,528.8 981.0,522.0 C990.0,515.2 1020.7,497.4 1034.9,491.1 C1049.1,484.8 1058.5,488.5 1066.0,484.0 C1073.5,479.5 1077.3,473.0 1080.0,464.0 C1082.7,455.0 1080.5,433.7 1082.0,430.0Z" fill="#000000" />
<path d="M703.0,288.0 C707.7,284.6 713.3,281.0 718.4,279.1 C723.5,277.2 726.8,277.0 733.7,276.5 C740.6,276.0 751.1,276.9 760.0,276.0 C768.9,275.1 779.5,269.7 787.0,271.2 C794.5,272.7 801.1,282.0 805.0,285.0 C808.9,288.0 806.6,287.4 810.5,289.2 C814.4,291.0 822.2,293.9 828.4,295.6 C834.6,297.3 841.2,297.5 847.6,299.4 C854.0,301.3 860.4,304.1 866.8,307.1 C873.2,310.1 879.9,313.7 885.9,317.3 C891.9,320.9 897.9,324.8 902.6,328.8 C907.3,332.9 910.9,338.1 914.1,341.6 C917.3,345.1 919.9,349.6 921.8,350.0 C923.7,350.4 923.0,346.2 925.6,344.2 C928.2,342.2 933.1,339.1 937.1,337.8 C941.1,336.5 945.6,335.9 949.9,336.5 C954.2,337.1 958.2,337.8 962.7,341.6 C967.2,345.4 971.4,352.5 976.7,359.1 C982.0,365.8 989.0,376.3 994.6,381.5 C1000.2,386.7 1006.9,389.5 1010.2,390.4 C1013.6,391.3 1012.5,388.8 1014.7,387.1 C1017.0,385.4 1020.3,381.3 1023.7,380.4 C1027.1,379.5 1031.9,379.4 1034.9,381.5 C1037.9,383.6 1040.1,389.7 1041.6,392.7 C1043.1,395.7 1041.2,397.9 1043.8,399.4 C1046.4,400.9 1053.1,400.1 1057.2,401.6 C1061.3,403.1 1064.7,404.6 1068.4,408.3 C1072.1,412.0 1077.0,418.4 1079.6,424.0 C1082.2,429.6 1083.0,433.7 1084.1,441.9 C1085.2,450.1 1087.0,465.7 1086.3,473.2 C1085.5,480.7 1083.7,483.0 1079.6,486.7 C1075.5,490.4 1067.7,491.9 1061.7,495.6 C1055.7,499.3 1050.5,505.3 1043.8,509.0 C1037.1,512.7 1028.9,515.4 1021.4,518.0 C1013.9,520.6 1005.7,522.8 999.0,524.7 C992.3,526.6 986.7,528.1 981.1,529.2 C975.5,530.3 971.8,531.4 965.5,531.4 C959.2,531.4 952.4,531.1 943.1,529.2 C933.8,527.3 920.7,524.3 909.5,520.2 C898.3,516.1 885.7,510.9 876.0,504.6 C866.3,498.3 857.6,489.7 851.3,482.2 C844.9,474.7 840.9,466.8 837.9,459.8 C834.9,452.8 834.8,444.3 833.4,440.0 C832.0,435.7 832.0,434.7 829.5,434.0 C827.0,433.3 823.4,435.7 818.6,435.8 C813.8,435.9 807.1,435.9 800.5,434.9 C793.9,433.8 786.9,431.9 778.7,429.5 C770.6,427.1 760.7,424.0 751.6,420.4 C742.5,416.8 732.6,412.2 724.4,407.7 C716.2,403.2 708.6,398.3 702.6,393.2 C696.6,388.1 691.9,382.6 688.1,376.9 C684.3,371.2 681.8,365.1 680.0,358.8 C678.2,352.5 677.2,345.2 677.2,338.9 C677.2,332.5 677.8,327.3 680.0,320.7 C682.2,314.1 686.4,304.9 690.2,299.5 C694.0,294.1 698.3,291.4 703.0,288.0Z" fill="#0000ff" stroke="#000000" stroke-width="2.0"/>
<path d="M703.0,288.0 C707.7,284.6 713.3,281.0 718.4,279.1 C723.5,277.2 726.8,277.0 733.7,276.5 C740.6,276.0 751.1,276.9 760.0,276.0 C768.9,275.1 779.5,269.7 787.0,271.2 C794.5,272.7 801.1,282.0 805.0,285.0 C808.9,288.0 806.6,287.4 810.5,289.2 C814.4,291.0 822.2,293.9 828.4,295.6 C834.6,297.3 841.2,297.5 847.6,299.4 C854.0,301.3 860.4,304.1 866.8,307.1 C873.2,310.1 879.9,313.7 885.9,317.3 C891.9,320.9 897.9,324.8 902.6,328.8 C907.3,332.9 910.9,338.1 914.1,341.6 C917.3,345.1 919.9,349.6 921.8,350.0 C923.7,350.4 923.0,346.2 925.6,344.2 C928.2,342.2 933.1,339.1 937.1,337.8 C941.1,336.5 945.6,335.9 949.9,336.5 C954.2,337.1 958.2,337.8 962.7,341.6 C967.2,345.4 971.4,352.5 976.7,359.1 C982.0,365.8 989.0,376.3 994.6,381.5 C1000.2,386.7 1006.9,389.5 1010.2,390.4 C1013.6,391.3 1012.5,388.8 1014.7,387.1 C1017.0,385.4 1020.3,381.3 1023.7,380.4 C1027.1,379.5 1031.9,379.4 1034.9,381.5 C1037.9,383.6 1040.1,389.7 1041.6,392.7 C1043.1,395.7 1041.2,397.9 1043.8,399.4 C1046.4,400.9 1053.1,400.1 1057.2,401.6 C1061.3,403.1 1064.7,404.6 1068.4,408.3 C1072.1,412.0 1077.0,418.4 1079.6,424.0 C1082.2,429.6 1083.0,433.7 1084.1,441.9 C1085.2,450.1 1087.0,465.7 1086.3,473.2 C1085.5,480.7 1083.7,483.0 1079.6,486.7 C1075.5,490.4 1067.7,491.9 1061.7,495.6 C1055.7,499.3 1050.5,505.3 1043.8,509.0 C1037.1,512.7 1028.9,515.4 1021.4,518.0 C1013.9,520.6 1005.7,522.8 999.0,524.7 C992.3,526.6 986.7,528.1 981.1,529.2 C975.5,530.3 971.8,531.4 965.5,531.4 C959.2,531.4 952.4,531.1 943.1,529.2 C933.8,527.3 920.7,524.3 909.5,520.2 C898.3,516.1 885.7,510.9 876.0,504.6 C866.3,498.3 857.6,489.7 851.3,482.2 C844.9,474.7 840.9,466.8 837.9,459.8 C834.9,452.8 834.8,444.3 833.4,440.0 C832.0,435.7 832.0,434.7 829.5,434.0 C827.0,433.3 823.4,435.7 818.6,435.8 C813.8,435.9 807.1,435.9 800.5,434.9 C793.9,433.8 786.9,431.9 778.7,429.5 C770.6,427.1 760.7,424.0 751.6,420.4 C742.5,416.8 732.6,412.2 724.4,407.7 C716.2,403.2 708.6,398.3 702.6,393.2 C696.6,388.1 691.9,382.6 688.1,376.9 C684.3,371.2 681.8,365.1 680.0,358.8 C678.2,352.5 677.2,345.2 677.2,338.9 C677.2,332.5 677.8,327.3 680.0,320.7 C682.2,314.1 686.4,304.9 690.2,299.5 C694.0,294.1 698.3,291.4 703.0,288.0Z" fill="url(#pbb)" />
<path d="M1072.9,464.8 C1074.6,459.5 1079.5,440.7 1081.8,436.6 C1084.1,432.6 1086.0,436.9 1087.0,440.5 C1088.0,444.1 1087.8,452.0 1087.6,458.4 C1087.4,464.8 1086.7,473.3 1085.7,478.9 C1084.7,484.4 1085.2,488.7 1081.8,491.7 C1078.4,494.7 1070.5,493.8 1065.2,496.8 C1059.9,499.8 1056.2,505.6 1049.8,509.6 C1043.4,513.6 1034.9,517.9 1026.8,521.1 C1018.7,524.3 1009.1,526.9 1001.2,528.8 C993.3,530.7 983.0,532.6 979.4,532.6 C975.8,532.6 973.6,530.7 979.4,528.8 C985.2,526.9 1004.0,524.7 1014.0,521.1 C1024.0,517.5 1035.3,511.1 1039.6,507.0 C1043.9,502.9 1040.9,500.2 1039.6,496.8 C1038.3,493.4 1029.8,489.4 1031.9,486.6 C1034.0,483.8 1045.8,483.2 1052.4,480.2 C1059.0,477.2 1068.2,471.2 1071.6,468.6 C1075.0,466.0 1071.2,470.1 1072.9,464.8Z" fill="#000000" />
<path d="M641.5,197.0 C636.9,192.6 641.6,191.0 642.6,188.8 C643.6,186.7 645.1,185.4 647.3,184.1 C649.4,182.8 652.2,181.8 655.5,181.1 C658.8,180.4 663.4,180.1 667.3,180.0 C671.2,179.9 675.2,180.3 679.0,180.6 C682.8,180.9 684.7,181.2 690.0,181.8 C695.3,182.4 703.9,182.2 710.8,183.9 C717.7,185.6 724.7,189.4 731.6,192.2 C738.5,195.0 745.5,197.3 752.4,200.5 C759.3,203.7 767.0,207.7 773.2,211.6 C779.4,215.5 785.2,219.9 789.8,224.1 C794.4,228.2 797.7,232.1 800.9,236.5 C804.1,240.9 807.4,245.3 809.2,250.4 C811.1,255.5 811.5,261.9 812.0,267.0 C812.5,272.1 812.2,276.7 812.0,280.9 C811.8,285.1 813.4,289.3 810.6,292.0 C807.8,294.7 801.8,296.8 795.0,297.0 C788.2,297.2 776.4,295.5 770.0,293.0 C763.6,290.5 762.8,284.5 756.8,282.0 C750.8,279.5 740.1,278.5 733.7,278.0 C727.3,277.5 724.0,279.6 718.4,279.1 C712.8,278.6 704.7,279.9 700.0,275.0 C695.3,270.1 695.0,260.0 690.0,250.0 C685.0,240.0 678.1,223.8 670.0,215.0 C661.9,206.2 646.1,201.4 641.5,197.0Z" fill="#0000ff" stroke="#000000" stroke-width="2.0"/>
<path d="M641.5,197.0 C636.9,192.6 641.6,191.0 642.6,188.8 C643.6,186.7 645.1,185.4 647.3,184.1 C649.4,182.8 652.2,181.8 655.5,181.1 C658.8,180.4 663.4,180.1 667.3,180.0 C671.2,179.9 675.2,180.3 679.0,180.6 C682.8,180.9 684.7,181.2 690.0,181.8 C695.3,182.4 703.9,182.2 710.8,183.9 C717.7,185.6 724.7,189.4 731.6,192.2 C738.5,195.0 745.5,197.3 752.4,200.5 C759.3,203.7 767.0,207.7 773.2,211.6 C779.4,215.5 785.2,219.9 789.8,224.1 C794.4,228.2 797.7,232.1 800.9,236.5 C804.1,240.9 807.4,245.3 809.2,250.4 C811.1,255.5 811.5,261.9 812.0,267.0 C812.5,272.1 812.2,276.7 812.0,280.9 C811.8,285.1 813.4,289.3 810.6,292.0 C807.8,294.7 801.8,296.8 795.0,297.0 C788.2,297.2 776.4,295.5 770.0,293.0 C763.6,290.5 762.8,284.5 756.8,282.0 C750.8,279.5 740.1,278.5 733.7,278.0 C727.3,277.5 724.0,279.6 718.4,279.1 C712.8,278.6 704.7,279.9 700.0,275.0 C695.3,270.1 695.0,260.0 690.0,250.0 C685.0,240.0 678.1,223.8 670.0,215.0 C661.9,206.2 646.1,201.4 641.5,197.0Z" fill="url(#pbb)" />
<path d="M690.0,181.8 C693.5,179.3 703.9,182.2 710.8,183.9 C717.7,185.6 724.7,189.4 731.6,192.2 C738.5,195.0 745.5,197.3 752.4,200.5 C759.3,203.7 767.0,207.7 773.2,211.6 C779.4,215.5 785.2,219.9 789.8,224.1 C794.4,228.2 797.7,232.1 800.9,236.5 C804.1,240.9 807.4,245.3 809.2,250.4 C811.1,255.5 811.5,261.9 812.0,267.0 C812.5,272.1 812.2,276.7 812.0,280.9 C811.8,285.1 813.4,289.7 810.6,292.0 C807.8,294.3 797.5,296.7 795.4,294.8 C793.3,292.9 797.6,285.5 798.1,280.9 C798.6,276.3 798.6,271.6 798.1,267.0 C797.6,262.4 798.2,258.1 795.4,253.2 C792.6,248.3 786.4,242.3 781.5,237.9 C776.6,233.5 772.3,230.5 766.3,226.8 C760.3,223.1 753.6,219.5 745.5,215.8 C737.4,212.1 727.0,207.5 717.7,204.7 C708.5,201.9 694.6,202.9 690.0,199.1 C685.4,195.3 686.5,184.3 690.0,181.8Z" fill="#3bb4dc" />
<path d="M690.0,181.8 C693.5,179.3 703.9,182.2 710.8,183.9 C717.7,185.6 724.7,189.4 731.6,192.2 C738.5,195.0 745.5,197.3 752.4,200.5 C759.3,203.7 767.0,207.7 773.2,211.6 C779.4,215.5 785.2,219.9 789.8,224.1 C794.4,228.2 797.7,232.1 800.9,236.5 C804.1,240.9 807.4,245.3 809.2,250.4 C811.1,255.5 811.5,261.9 812.0,267.0 C812.5,272.1 812.2,276.7 812.0,280.9 C811.8,285.1 813.4,289.7 810.6,292.0 C807.8,294.3 797.5,296.7 795.4,294.8 C793.3,292.9 797.6,285.5 798.1,280.9 C798.6,276.3 798.6,271.6 798.1,267.0 C797.6,262.4 798.2,258.1 795.4,253.2 C792.6,248.3 786.4,242.3 781.5,237.9 C776.6,233.5 772.3,230.5 766.3,226.8 C760.3,223.1 753.6,219.5 745.5,215.8 C737.4,212.1 727.0,207.5 717.7,204.7 C708.5,201.9 694.6,202.9 690.0,199.1 C685.4,195.3 686.5,184.3 690.0,181.8Z" fill="url(#pba)" />
<path d="M660.0,196.0 C664.3,196.0 680.4,197.7 690.0,199.1 C699.6,200.5 708.5,201.9 717.7,204.7 C727.0,207.5 737.4,212.1 745.5,215.8 C753.6,219.5 760.3,223.1 766.3,226.8 C772.3,230.5 779.3,235.5 781.5,237.9 C783.7,240.3 783.7,241.8 779.7,241.0 C775.7,240.2 764.6,235.6 757.3,233.0 C750.0,230.4 743.0,228.7 736.0,225.5 C729.0,222.3 722.7,217.4 715.0,214.0 C707.3,210.6 698.5,207.5 690.0,205.0 C681.5,202.5 669.0,200.5 664.0,199.0 C659.0,197.5 655.7,196.0 660.0,196.0Z" fill="#000000" />
<path d="M656.0,183.0 C656.8,180.4 660.7,180.3 662.0,181.5 C663.3,182.7 664.0,187.2 664.0,190.0 C664.0,192.8 663.2,197.3 662.0,198.5 C660.8,199.7 658.0,199.6 657.0,197.0 C656.0,194.4 655.2,185.6 656.0,183.0Z" fill="#000000" />
<path d="M703.0,300.0 C704.3,295.2 709.2,288.7 712.0,285.0 C714.8,281.3 716.0,278.8 720.0,277.6 C724.0,276.4 728.9,277.5 736.0,277.6 C743.1,277.7 755.3,278.3 762.6,278.1 C769.9,277.9 774.7,277.6 779.7,276.5 C784.7,275.4 789.3,273.5 792.5,271.2 C795.7,268.9 797.8,261.4 798.9,262.6 C800.0,263.8 799.6,273.6 798.9,278.6 C798.2,283.6 796.4,288.4 794.6,292.5 C792.8,296.6 791.8,300.9 788.2,303.2 C784.7,305.5 779.3,305.7 773.3,306.4 C767.3,307.1 758.4,306.8 752.0,307.4 C745.6,308.0 739.3,308.1 735.0,310.0 C730.7,311.9 727.4,315.1 726.1,318.7 C724.8,322.3 725.6,326.6 727.3,331.5 C729.0,336.4 736.7,346.5 736.3,348.2 C735.9,349.9 728.6,345.0 724.8,341.8 C721.0,338.6 716.7,333.7 713.3,329.0 C709.9,324.3 706.0,318.4 704.3,313.6 C702.6,308.8 701.7,304.8 703.0,300.0Z" fill="#000000" />
<path d="M719.0,284.0 C722.9,283.0 734.4,282.0 741.3,281.8 C748.2,281.6 758.4,281.5 760.5,282.9 C762.6,284.3 756.8,287.7 754.1,290.4 C751.4,293.1 748.4,298.9 744.5,298.9 C740.6,298.9 735.1,292.2 730.7,290.4 C726.3,288.6 720.0,289.1 718.0,288.0 C716.0,286.9 715.1,285.0 719.0,284.0Z" fill="#0000ff" />
<path d="M719.0,284.0 C722.9,283.0 734.4,282.0 741.3,281.8 C748.2,281.6 758.4,281.5 760.5,282.9 C762.6,284.3 756.8,287.7 754.1,290.4 C751.4,293.1 748.4,298.9 744.5,298.9 C740.6,298.9 735.1,292.2 730.7,290.4 C726.3,288.6 720.0,289.1 718.0,288.0 C716.0,286.9 715.1,285.0 719.0,284.0Z" fill="url(#pbb)" />
<path d="M703.0,288.0 C700.9,287.9 693.6,296.3 690.2,299.5 C686.8,302.7 684.3,303.7 682.6,307.2 C680.9,310.7 680.9,315.4 680.0,320.7 C679.1,326.0 677.2,332.5 677.2,338.9 C677.2,345.2 678.2,352.5 680.0,358.8 C681.8,365.1 684.3,371.2 688.1,376.9 C691.9,382.6 696.6,388.1 702.6,393.2 C708.6,398.3 716.2,403.2 724.4,407.7 C732.6,412.2 742.5,416.8 751.6,420.4 C760.7,424.0 770.6,427.1 778.7,429.5 C786.9,431.9 793.9,433.8 800.5,434.9 C807.1,435.9 813.8,435.9 818.6,435.8 C823.4,435.7 826.5,435.4 829.5,434.0 C832.5,432.6 835.0,431.7 836.7,427.7 C838.5,423.7 838.4,417.8 840.0,410.0 C841.6,402.2 847.4,386.8 846.3,381.0 C845.2,375.2 839.9,377.3 833.5,375.0 C827.1,372.7 816.4,369.9 807.9,367.3 C799.4,364.8 790.8,361.8 782.3,359.7 C773.8,357.6 764.5,356.4 756.8,354.5 C749.1,352.6 741.6,350.3 736.3,348.2 C731.0,346.1 728.6,345.0 724.8,341.8 C721.0,338.6 716.7,333.7 713.3,329.0 C709.9,324.3 706.0,318.4 704.3,313.6 C702.6,308.8 703.2,304.3 703.0,300.0 C702.8,295.7 705.1,288.1 703.0,288.0Z" fill="#3bb4dc" />
<path d="M678.0,330.0 C677.0,330.1 676.9,334.1 677.2,338.9 C677.5,343.7 678.2,352.5 680.0,358.8 C681.8,365.1 684.3,371.2 688.1,376.9 C691.9,382.6 696.6,388.1 702.6,393.2 C708.6,398.3 716.2,403.2 724.4,407.7 C732.6,412.2 742.5,416.8 751.6,420.4 C760.7,424.0 770.6,427.1 778.7,429.5 C786.9,431.9 794.3,433.9 800.5,434.9 C806.7,435.9 813.6,437.1 816.0,435.5 C818.4,433.9 815.8,428.4 815.0,425.0 C814.2,421.6 815.9,417.9 811.4,415.0 C806.9,412.1 797.8,410.7 787.8,407.7 C777.8,404.7 763.7,401.7 751.6,396.9 C739.5,392.1 725.0,385.3 715.3,378.7 C705.6,372.1 699.0,363.8 693.6,357.0 C688.2,350.2 685.6,342.5 683.0,338.0 C680.4,333.5 679.0,329.9 678.0,330.0Z" fill="#a6cee0" />
<path d="M703.0,288.0 C700.9,287.9 693.6,296.3 690.2,299.5 C686.8,302.7 684.3,303.7 682.6,307.2 C680.9,310.7 680.9,315.4 680.0,320.7 C679.1,326.0 677.2,332.5 677.2,338.9 C677.2,345.2 678.2,352.5 680.0,358.8 C681.8,365.1 684.3,371.2 688.1,376.9 C691.9,382.6 696.6,388.1 702.6,393.2 C708.6,398.3 716.2,403.2 724.4,407.7 C732.6,412.2 742.5,416.8 751.6,420.4 C760.7,424.0 770.6,427.1 778.7,429.5 C786.9,431.9 793.9,433.8 800.5,434.9 C807.1,435.9 813.8,435.9 818.6,435.8 C823.4,435.7 826.5,435.4 829.5,434.0 C832.5,432.6 835.0,431.7 836.7,427.7 C838.5,423.7 838.4,417.8 840.0,410.0 C841.6,402.2 847.4,386.8 846.3,381.0 C845.2,375.2 839.9,377.3 833.5,375.0 C827.1,372.7 816.4,369.9 807.9,367.3 C799.4,364.8 790.8,361.8 782.3,359.7 C773.8,357.6 764.5,356.4 756.8,354.5 C749.1,352.6 741.6,350.3 736.3,348.2 C731.0,346.1 728.6,345.0 724.8,341.8 C721.0,338.6 716.7,333.7 713.3,329.0 C709.9,324.3 706.0,318.4 704.3,313.6 C702.6,308.8 703.2,304.3 703.0,300.0 C702.8,295.7 705.1,288.1 703.0,288.0Z" fill="url(#pba)" />
<path d="M777.0,305.0 C782.7,303.9 799.8,306.4 810.7,309.3 C821.6,312.2 833.7,317.5 842.6,322.1 C851.5,326.7 858.7,330.7 864.0,337.0 C869.3,343.3 873.1,355.0 874.6,360.0 C876.1,365.0 874.4,365.7 873.0,367.0 C871.6,368.3 868.2,370.5 866.0,368.0 C863.8,365.5 863.6,357.2 859.7,352.0 C855.8,346.8 850.8,342.0 842.6,337.0 C834.4,332.0 821.7,325.7 810.7,322.1 C799.7,318.6 782.1,318.6 776.5,315.7 C770.9,312.8 771.3,306.1 777.0,305.0Z" fill="#3bb4dc" />
<path d="M790.0,313.0 C793.5,313.0 802.2,314.0 811.0,317.0 C819.8,320.0 834.8,326.5 843.0,331.0 C851.2,335.5 855.7,339.5 860.0,344.0 C864.3,348.5 867.5,354.3 869.0,358.0 C870.5,361.7 869.7,364.7 869.0,366.0 C868.3,367.3 866.5,368.0 865.0,366.0 C863.5,364.0 863.7,358.5 860.0,354.0 C856.3,349.5 851.2,344.2 843.0,339.0 C834.8,333.8 819.8,326.7 811.0,323.0 C802.2,319.3 793.5,318.7 790.0,317.0 C786.5,315.3 786.5,313.0 790.0,313.0Z" fill="#a6cee0" />
<path d="M947.0,338.0 C948.5,336.2 953.8,337.7 958.8,341.2 C963.8,344.7 970.7,352.4 976.7,359.1 C982.7,365.8 989.0,376.3 994.6,381.5 C1000.2,386.7 1002.5,388.1 1010.2,390.4 C1017.9,392.6 1033.2,393.1 1041.0,395.0 C1048.8,396.9 1056.7,400.0 1057.2,401.6 C1057.7,403.2 1051.6,404.1 1043.8,404.5 C1036.0,404.9 1021.4,405.9 1010.2,404.0 C999.0,402.1 985.3,397.8 976.7,393.0 C968.1,388.2 963.2,381.8 958.8,375.0 C954.3,368.2 952.0,358.2 950.0,352.0 C948.0,345.8 945.5,339.8 947.0,338.0Z" fill="#3bb4dc" />
<path d="M947.0,338.0 C948.5,336.2 953.8,337.7 958.8,341.2 C963.8,344.7 970.7,352.4 976.7,359.1 C982.7,365.8 989.0,376.3 994.6,381.5 C1000.2,386.7 1002.5,388.1 1010.2,390.4 C1017.9,392.6 1033.2,393.1 1041.0,395.0 C1048.8,396.9 1056.7,400.0 1057.2,401.6 C1057.7,403.2 1051.6,404.1 1043.8,404.5 C1036.0,404.9 1021.4,405.9 1010.2,404.0 C999.0,402.1 985.3,397.8 976.7,393.0 C968.1,388.2 963.2,381.8 958.8,375.0 C954.3,368.2 952.0,358.2 950.0,352.0 C948.0,345.8 945.5,339.8 947.0,338.0Z" fill="url(#pba)" />
<path d="M1012.0,391.0 C1009.7,389.0 1014.0,385.8 1016.0,384.0 C1018.0,382.2 1020.9,380.8 1024.0,380.4 C1027.2,380.0 1032.0,379.4 1034.9,381.5 C1037.8,383.6 1042.4,390.3 1041.6,392.7 C1040.8,395.1 1034.9,396.3 1030.0,396.0 C1025.1,395.7 1014.3,393.0 1012.0,391.0Z" fill="#3bb4dc" />
<path d="M903.0,397.0 C903.7,392.0 907.8,391.2 912.0,391.0 C916.2,390.8 924.0,392.5 928.0,396.0 C932.0,399.5 934.7,405.8 936.0,412.0 C937.3,418.2 938.5,429.5 936.0,433.0 C933.5,436.5 925.7,435.0 921.0,433.0 C916.3,431.0 911.0,427.0 908.0,421.0 C905.0,415.0 902.3,402.0 903.0,397.0Z" fill="#000000" />
<path d="M772.0,318.0 C774.7,316.7 784.0,315.7 790.0,317.0 C796.0,318.3 803.0,321.8 808.0,326.0 C813.0,330.2 817.7,338.0 820.0,342.0 C822.3,346.0 824.3,350.3 822.0,350.0 C819.7,349.7 811.7,343.0 806.0,340.0 C800.3,337.0 793.3,334.5 788.0,332.0 C782.7,329.5 776.7,327.3 774.0,325.0 C771.3,322.7 769.3,319.3 772.0,318.0Z" fill="#000000" />
<path d="M846.9,381.5 C851.6,374.8 858.1,370.6 864.8,368.0 C871.5,365.4 881.2,365.1 887.1,365.8 C893.0,366.5 898.2,368.0 900.0,372.0 C901.8,376.0 897.7,382.8 898.0,390.0 C898.3,397.2 899.3,408.3 902.0,415.0 C904.7,421.7 908.3,426.5 914.0,430.0 C919.7,433.5 925.5,436.6 936.0,436.0 C946.5,435.4 964.3,429.7 976.7,426.2 C989.1,422.7 999.0,418.4 1010.2,415.0 C1021.4,411.6 1034.5,407.2 1043.8,406.1 C1053.1,405.0 1060.6,406.8 1066.2,408.3 C1071.8,409.8 1078.0,411.8 1077.4,415.0 C1076.8,418.2 1071.0,423.2 1062.6,427.7 C1054.2,432.2 1039.2,437.3 1026.8,441.8 C1014.4,446.3 999.1,451.2 988.4,454.6 C977.7,458.0 962.8,459.0 962.8,462.2 C962.8,465.4 980.9,470.4 988.4,473.8 C995.9,477.2 1000.8,480.6 1007.6,482.7 C1014.4,484.8 1024.1,484.2 1029.4,486.6 C1034.7,489.0 1038.3,493.8 1039.6,496.8 C1040.9,499.8 1039.1,501.9 1037.0,504.5 C1034.9,507.1 1032.8,509.4 1026.8,512.2 C1020.8,515.0 1009.1,518.6 1001.2,521.1 C993.3,523.6 985.4,525.9 979.4,527.5 C973.4,529.1 971.5,530.2 965.5,530.5 C959.5,530.8 952.4,530.9 943.1,529.2 C933.8,527.5 920.7,524.3 909.5,520.2 C898.3,516.1 885.7,510.9 876.0,504.6 C866.3,498.3 857.6,489.7 851.3,482.2 C844.9,474.7 840.9,467.6 837.9,459.8 C834.9,452.0 833.6,443.8 833.4,435.2 C833.2,426.6 834.5,417.2 836.8,408.3 C839.0,399.4 842.2,388.2 846.9,381.5Z" fill="#3bb4dc" />
<path d="M834.0,440.0 C833.3,444.6 835.0,452.8 837.9,459.8 C840.8,466.8 844.9,474.7 851.3,482.2 C857.6,489.7 866.3,498.3 876.0,504.6 C885.7,510.9 898.3,516.1 909.5,520.2 C920.7,524.3 933.8,527.3 943.1,529.2 C952.4,531.1 959.2,531.4 965.5,531.4 C971.8,531.4 979.2,531.1 981.1,529.2 C983.0,527.3 981.2,525.1 976.7,520.2 C972.2,515.4 965.5,505.7 954.3,500.1 C943.1,494.5 924.4,494.2 909.5,486.7 C894.6,479.2 876.0,464.4 864.8,455.3 C853.5,446.2 847.1,434.6 842.0,432.0 C836.9,429.4 834.7,435.4 834.0,440.0Z" fill="#a6cee0" />
<path d="M846.9,381.5 C851.6,374.8 858.1,370.6 864.8,368.0 C871.5,365.4 881.2,365.1 887.1,365.8 C893.0,366.5 898.2,368.0 900.0,372.0 C901.8,376.0 897.7,382.8 898.0,390.0 C898.3,397.2 899.3,408.3 902.0,415.0 C904.7,421.7 908.3,426.5 914.0,430.0 C919.7,433.5 925.5,436.6 936.0,436.0 C946.5,435.4 964.3,429.7 976.7,426.2 C989.1,422.7 999.0,418.4 1010.2,415.0 C1021.4,411.6 1034.5,407.2 1043.8,406.1 C1053.1,405.0 1060.6,406.8 1066.2,408.3 C1071.8,409.8 1078.0,411.8 1077.4,415.0 C1076.8,418.2 1071.0,423.2 1062.6,427.7 C1054.2,432.2 1039.2,437.3 1026.8,441.8 C1014.4,446.3 999.1,451.2 988.4,454.6 C977.7,458.0 962.8,459.0 962.8,462.2 C962.8,465.4 980.9,470.4 988.4,473.8 C995.9,477.2 1000.8,480.6 1007.6,482.7 C1014.4,484.8 1024.1,484.2 1029.4,486.6 C1034.7,489.0 1038.3,493.8 1039.6,496.8 C1040.9,499.8 1039.1,501.9 1037.0,504.5 C1034.9,507.1 1032.8,509.4 1026.8,512.2 C1020.8,515.0 1009.1,518.6 1001.2,521.1 C993.3,523.6 985.4,525.9 979.4,527.5 C973.4,529.1 971.5,530.2 965.5,530.5 C959.5,530.8 952.4,530.9 943.1,529.2 C933.8,527.5 920.7,524.3 909.5,520.2 C898.3,516.1 885.7,510.9 876.0,504.6 C866.3,498.3 857.6,489.7 851.3,482.2 C844.9,474.7 840.9,467.6 837.9,459.8 C834.9,452.0 833.6,443.8 833.4,435.2 C833.2,426.6 834.5,417.2 836.8,408.3 C839.0,399.4 842.2,388.2 846.9,381.5Z" fill="url(#pba)" />
<path d="M836,440 C836,420 842,398 852,384 C862,372 878,365 895,364 C905,364 912,366 918,369" fill="none" stroke="#0000ff" stroke-width="1.6"/>
<path d="M977.6,530.7 C980.8,532.6 972.9,538.7 971.8,544.1 C970.7,549.5 969.9,557.2 970.9,563.3 C971.9,569.4 974.6,575.1 977.6,580.6 C980.6,586.1 986.4,590.2 989.1,596.0 C991.8,601.8 993.4,608.8 993.9,615.2 C994.4,621.6 993.4,628.3 992.0,634.4 C990.6,640.5 988.0,646.8 985.3,651.6 C982.6,656.4 977.5,661.2 975.7,663.1 C973.9,665.0 973.8,665.7 974.7,663.1 C975.7,660.5 979.3,653.2 981.4,647.8 C983.5,642.4 985.9,636.6 987.2,630.5 C988.5,624.4 990.1,617.0 989.1,611.3 C988.1,605.5 985.6,601.8 981.4,596.0 C977.2,590.2 968.4,583.8 964.1,576.8 C959.8,569.8 957.4,561.1 955.5,553.7 C953.6,546.3 948.9,536.4 952.6,532.6 C956.3,528.8 974.4,528.8 977.6,530.7Z" fill="#a6cee0" stroke="#000000" stroke-width="1.5"/>
<path d="M953,532 C954,556 962,578 980,596 C990,608 989,630 975,663" fill="none" stroke="#000000" stroke-width="2.2"/>
<path d="M952.6,532.6 C954.2,528.8 963.4,528.1 965.0,531.0 C966.6,533.9 961.8,543.2 962.0,550.0 C962.2,556.8 962.8,564.3 966.0,572.0 C969.2,579.7 977.5,589.5 981.4,596.0 C985.2,602.5 988.1,605.5 989.1,611.3 C990.1,617.0 988.5,624.4 987.2,630.5 C985.9,636.6 983.5,642.4 981.4,647.8 C979.3,653.2 974.7,663.1 974.7,663.1 C974.7,663.1 979.5,653.2 981.4,647.8 C983.3,642.4 985.2,636.6 986.0,630.5 C986.8,624.4 987.3,617.0 986.0,611.3 C984.7,605.5 981.6,601.8 978.0,596.0 C974.4,590.2 967.9,583.8 964.1,576.8 C960.4,569.8 957.4,561.1 955.5,553.7 C953.6,546.3 951.0,536.4 952.6,532.6Z" fill="#3bb4dc" />
<path d="M582.8,226.3 C583.0,223.0 584.8,218.4 586.4,215.7 C588.0,213.0 589.5,211.8 592.2,209.9 C594.9,208.0 599.7,205.7 602.8,204.0 C605.9,202.3 608.1,200.9 611.0,199.9 C613.9,198.9 616.9,198.5 620.4,198.1 C623.9,197.7 628.6,197.7 632.1,197.6 C635.6,197.5 637.7,196.9 641.5,197.5 C645.3,198.1 650.8,199.2 655.0,201.0 C659.2,202.8 662.0,205.7 667.0,208.0 C672.0,210.3 679.5,213.2 685.0,215.0 C690.5,216.8 694.5,217.7 700.0,219.0 C705.5,220.3 712.9,220.0 717.7,222.7 C722.5,225.4 726.2,230.6 728.8,235.2 C731.3,239.8 732.8,245.6 733.0,250.4 C733.2,255.2 732.8,260.6 730.2,264.3 C727.7,268.0 722.7,270.9 717.7,272.6 C712.7,274.3 705.5,274.5 700.0,274.4 C694.5,274.3 690.4,273.0 684.9,272.0 C679.4,271.0 674.1,269.9 667.3,268.5 C660.4,267.1 650.6,265.4 643.8,263.8 C636.9,262.2 632.1,260.7 626.2,259.1 C620.3,257.5 613.5,256.0 608.6,254.4 C603.7,252.8 600.0,251.6 596.9,249.7 C593.8,247.8 591.8,245.0 589.9,242.7 C588.0,240.4 586.4,238.4 585.2,235.7 C584.0,233.0 582.6,229.6 582.8,226.3Z" fill="#3bb4dc" stroke="#000000" stroke-width="2.0"/>
<path d="M586.4,215.7 C587.2,214.5 589.5,211.8 592.2,209.9 C594.9,208.0 599.7,205.7 602.8,204.0 C605.9,202.3 608.1,200.9 611.0,199.9 C613.9,198.9 616.9,198.5 620.4,198.1 C623.9,197.7 628.6,197.7 632.1,197.6 C635.6,197.5 637.7,196.9 641.5,197.5 C645.3,198.1 650.7,199.1 655.0,201.0 C659.3,202.9 667.2,207.6 667.3,208.7 C667.4,209.8 659.4,207.7 655.5,207.5 C651.6,207.3 647.7,207.7 643.8,207.5 C639.9,207.3 636.0,206.2 632.1,206.4 C628.2,206.6 624.3,207.5 620.4,208.7 C616.5,209.9 612.5,212.2 608.6,213.4 C604.7,214.6 600.4,215.1 596.9,215.7 C593.4,216.3 589.2,216.9 587.5,216.9 C585.8,216.9 585.6,216.9 586.4,215.7Z" fill="#a6cee0" />
<path d="M586.0,236.0 C587.7,235.6 594.3,238.5 600.0,240.0 C605.7,241.5 612.7,243.5 620.0,245.0 C627.3,246.5 636.0,247.8 643.8,249.0 C651.6,250.2 659.3,251.2 667.0,252.0 C674.7,252.8 684.2,254.5 690.0,254.0 C695.8,253.5 700.5,248.8 702.0,249.0 C703.5,249.2 702.7,252.0 698.9,255.0 C695.1,258.0 684.3,264.9 679.0,267.2 C673.7,269.4 673.2,269.1 667.3,268.5 C661.4,267.9 650.6,265.4 643.8,263.8 C636.9,262.2 632.1,260.7 626.2,259.1 C620.3,257.5 613.5,256.0 608.6,254.4 C603.7,252.8 600.0,251.6 596.9,249.7 C593.8,247.8 591.7,245.0 589.9,242.7 C588.1,240.4 584.3,236.4 586.0,236.0Z" fill="#a6cee0" />
<path d="M582.8,226.3 C583.0,223.0 584.8,218.4 586.4,215.7 C588.0,213.0 589.5,211.8 592.2,209.9 C594.9,208.0 599.7,205.7 602.8,204.0 C605.9,202.3 608.1,200.9 611.0,199.9 C613.9,198.9 616.9,198.5 620.4,198.1 C623.9,197.7 628.6,197.7 632.1,197.6 C635.6,197.5 637.7,196.9 641.5,197.5 C645.3,198.1 650.8,199.2 655.0,201.0 C659.2,202.8 662.0,205.7 667.0,208.0 C672.0,210.3 679.5,213.2 685.0,215.0 C690.5,216.8 694.5,217.7 700.0,219.0 C705.5,220.3 712.9,220.0 717.7,222.7 C722.5,225.4 726.2,230.6 728.8,235.2 C731.3,239.8 732.8,245.6 733.0,250.4 C733.2,255.2 732.8,260.6 730.2,264.3 C727.7,268.0 722.7,270.9 717.7,272.6 C712.7,274.3 705.5,274.5 700.0,274.4 C694.5,274.3 690.4,273.0 684.9,272.0 C679.4,271.0 674.1,269.9 667.3,268.5 C660.4,267.1 650.6,265.4 643.8,263.8 C636.9,262.2 632.1,260.7 626.2,259.1 C620.3,257.5 613.5,256.0 608.6,254.4 C603.7,252.8 600.0,251.6 596.9,249.7 C593.8,247.8 591.8,245.0 589.9,242.7 C588.0,240.4 586.4,238.4 585.2,235.7 C584.0,233.0 582.6,229.6 582.8,226.3Z" fill="url(#pba)" />
<path d="M588,218 C600,217 612,213 625,210 C640,208 655,210 667,209" fill="none" stroke="#0000ff" stroke-width="2.2"/>
<path d="M586,236 C610,242 650,252 700,256" fill="none" stroke="#0000ff" stroke-width="1.2"/>
<ellipse cx="642" cy="232" rx="14" ry="11.5" fill="#0000ff"/>
<ellipse cx="642" cy="232" rx="7" ry="7.5" fill="#a6cee0"/>
<ellipse cx="642" cy="232" rx="1.2" ry="5.5" fill="#0000aa"/>
<path d="M586,235 C575,233 566,235 561,240 C558,243 559,246 563,246.5 C566,247 568,245 566,243.5 C570,239 577,238 586,238 Z" fill="#0000ff" stroke="#000000" stroke-width="0.8"/></g><g transform="translate(684.4,-19.5) scale(1.046)"><defs><pattern id="pga" width="24" height="16" patternUnits="userSpaceOnUse" patternTransform="rotate(-20)"><path d="M1,0.5 Q12,17 23,0.5 M-11,8.5 Q0,25 11,8.5 M13,8.5 Q24,25 35,8.5" fill="none" stroke="#15241a" stroke-width="0.9" opacity="0.8"/></pattern><pattern id="pgb" width="24" height="16" patternUnits="userSpaceOnUse" patternTransform="rotate(-20)"><path d="M1,0.5 Q12,17 23,0.5 M-11,8.5 Q0,25 11,8.5 M13,8.5 Q24,25 35,8.5" fill="none" stroke="#15241a" stroke-width="0.9" opacity="0.8"/></pattern></defs>
<path d="M1082.0,430.0 C1083.5,426.3 1087.3,436.0 1089.0,442.0 C1090.7,448.0 1091.8,458.0 1092.0,466.0 C1092.2,474.0 1093.3,484.3 1090.0,490.0 C1086.7,495.7 1079.5,496.3 1072.0,500.0 C1064.5,503.7 1053.7,508.5 1045.0,512.0 C1036.3,515.5 1027.7,518.3 1020.0,521.0 C1012.3,523.7 1005.5,526.2 999.0,528.0 C992.5,529.8 984.0,533.0 981.0,532.0 C978.0,531.0 972.0,528.8 981.0,522.0 C990.0,515.2 1020.7,497.4 1034.9,491.1 C1049.1,484.8 1058.5,488.5 1066.0,484.0 C1073.5,479.5 1077.3,473.0 1080.0,464.0 C1082.7,455.0 1080.5,433.7 1082.0,430.0Z" fill="#141c16" />
<path d="M703.0,288.0 C707.7,284.6 713.3,281.0 718.4,279.1 C723.5,277.2 726.8,277.0 733.7,276.5 C740.6,276.0 751.1,276.9 760.0,276.0 C768.9,275.1 779.5,269.7 787.0,271.2 C794.5,272.7 801.1,282.0 805.0,285.0 C808.9,288.0 806.6,287.4 810.5,289.2 C814.4,291.0 822.2,293.9 828.4,295.6 C834.6,297.3 841.2,297.5 847.6,299.4 C854.0,301.3 860.4,304.1 866.8,307.1 C873.2,310.1 879.9,313.7 885.9,317.3 C891.9,320.9 897.9,324.8 902.6,328.8 C907.3,332.9 910.9,338.1 914.1,341.6 C917.3,345.1 919.9,349.6 921.8,350.0 C923.7,350.4 923.0,346.2 925.6,344.2 C928.2,342.2 933.1,339.1 937.1,337.8 C941.1,336.5 945.6,335.9 949.9,336.5 C954.2,337.1 958.2,337.8 962.7,341.6 C967.2,345.4 971.4,352.5 976.7,359.1 C982.0,365.8 989.0,376.3 994.6,381.5 C1000.2,386.7 1006.9,389.5 1010.2,390.4 C1013.6,391.3 1012.5,388.8 1014.7,387.1 C1017.0,385.4 1020.3,381.3 1023.7,380.4 C1027.1,379.5 1031.9,379.4 1034.9,381.5 C1037.9,383.6 1040.1,389.7 1041.6,392.7 C1043.1,395.7 1041.2,397.9 1043.8,399.4 C1046.4,400.9 1053.1,400.1 1057.2,401.6 C1061.3,403.1 1064.7,404.6 1068.4,408.3 C1072.1,412.0 1077.0,418.4 1079.6,424.0 C1082.2,429.6 1083.0,433.7 1084.1,441.9 C1085.2,450.1 1087.0,465.7 1086.3,473.2 C1085.5,480.7 1083.7,483.0 1079.6,486.7 C1075.5,490.4 1067.7,491.9 1061.7,495.6 C1055.7,499.3 1050.5,505.3 1043.8,509.0 C1037.1,512.7 1028.9,515.4 1021.4,518.0 C1013.9,520.6 1005.7,522.8 999.0,524.7 C992.3,526.6 986.7,528.1 981.1,529.2 C975.5,530.3 971.8,531.4 965.5,531.4 C959.2,531.4 952.4,531.1 943.1,529.2 C933.8,527.3 920.7,524.3 909.5,520.2 C898.3,516.1 885.7,510.9 876.0,504.6 C866.3,498.3 857.6,489.7 851.3,482.2 C844.9,474.7 840.9,466.8 837.9,459.8 C834.9,452.8 834.8,444.3 833.4,440.0 C832.0,435.7 832.0,434.7 829.5,434.0 C827.0,433.3 823.4,435.7 818.6,435.8 C813.8,435.9 807.1,435.9 800.5,434.9 C793.9,433.8 786.9,431.9 778.7,429.5 C770.6,427.1 760.7,424.0 751.6,420.4 C742.5,416.8 732.6,412.2 724.4,407.7 C716.2,403.2 708.6,398.3 702.6,393.2 C696.6,388.1 691.9,382.6 688.1,376.9 C684.3,371.2 681.8,365.1 680.0,358.8 C678.2,352.5 677.2,345.2 677.2,338.9 C677.2,332.5 677.8,327.3 680.0,320.7 C682.2,314.1 686.4,304.9 690.2,299.5 C694.0,294.1 698.3,291.4 703.0,288.0Z" fill="#2c562c" stroke="#141c16" stroke-width="1.8"/>
<path d="M703.0,288.0 C707.7,284.6 713.3,281.0 718.4,279.1 C723.5,277.2 726.8,277.0 733.7,276.5 C740.6,276.0 751.1,276.9 760.0,276.0 C768.9,275.1 779.5,269.7 787.0,271.2 C794.5,272.7 801.1,282.0 805.0,285.0 C808.9,288.0 806.6,287.4 810.5,289.2 C814.4,291.0 822.2,293.9 828.4,295.6 C834.6,297.3 841.2,297.5 847.6,299.4 C854.0,301.3 860.4,304.1 866.8,307.1 C873.2,310.1 879.9,313.7 885.9,317.3 C891.9,320.9 897.9,324.8 902.6,328.8 C907.3,332.9 910.9,338.1 914.1,341.6 C917.3,345.1 919.9,349.6 921.8,350.0 C923.7,350.4 923.0,346.2 925.6,344.2 C928.2,342.2 933.1,339.1 937.1,337.8 C941.1,336.5 945.6,335.9 949.9,336.5 C954.2,337.1 958.2,337.8 962.7,341.6 C967.2,345.4 971.4,352.5 976.7,359.1 C982.0,365.8 989.0,376.3 994.6,381.5 C1000.2,386.7 1006.9,389.5 1010.2,390.4 C1013.6,391.3 1012.5,388.8 1014.7,387.1 C1017.0,385.4 1020.3,381.3 1023.7,380.4 C1027.1,379.5 1031.9,379.4 1034.9,381.5 C1037.9,383.6 1040.1,389.7 1041.6,392.7 C1043.1,395.7 1041.2,397.9 1043.8,399.4 C1046.4,400.9 1053.1,400.1 1057.2,401.6 C1061.3,403.1 1064.7,404.6 1068.4,408.3 C1072.1,412.0 1077.0,418.4 1079.6,424.0 C1082.2,429.6 1083.0,433.7 1084.1,441.9 C1085.2,450.1 1087.0,465.7 1086.3,473.2 C1085.5,480.7 1083.7,483.0 1079.6,486.7 C1075.5,490.4 1067.7,491.9 1061.7,495.6 C1055.7,499.3 1050.5,505.3 1043.8,509.0 C1037.1,512.7 1028.9,515.4 1021.4,518.0 C1013.9,520.6 1005.7,522.8 999.0,524.7 C992.3,526.6 986.7,528.1 981.1,529.2 C975.5,530.3 971.8,531.4 965.5,531.4 C959.2,531.4 952.4,531.1 943.1,529.2 C933.8,527.3 920.7,524.3 909.5,520.2 C898.3,516.1 885.7,510.9 876.0,504.6 C866.3,498.3 857.6,489.7 851.3,482.2 C844.9,474.7 840.9,466.8 837.9,459.8 C834.9,452.8 834.8,444.3 833.4,440.0 C832.0,435.7 832.0,434.7 829.5,434.0 C827.0,433.3 823.4,435.7 818.6,435.8 C813.8,435.9 807.1,435.9 800.5,434.9 C793.9,433.8 786.9,431.9 778.7,429.5 C770.6,427.1 760.7,424.0 751.6,420.4 C742.5,416.8 732.6,412.2 724.4,407.7 C716.2,403.2 708.6,398.3 702.6,393.2 C696.6,388.1 691.9,382.6 688.1,376.9 C684.3,371.2 681.8,365.1 680.0,358.8 C678.2,352.5 677.2,345.2 677.2,338.9 C677.2,332.5 677.8,327.3 680.0,320.7 C682.2,314.1 686.4,304.9 690.2,299.5 C694.0,294.1 698.3,291.4 703.0,288.0Z" fill="url(#pgb)" />
<path d="M1072.9,464.8 C1074.6,459.5 1079.5,440.7 1081.8,436.6 C1084.1,432.6 1086.0,436.9 1087.0,440.5 C1088.0,444.1 1087.8,452.0 1087.6,458.4 C1087.4,464.8 1086.7,473.3 1085.7,478.9 C1084.7,484.4 1085.2,488.7 1081.8,491.7 C1078.4,494.7 1070.5,493.8 1065.2,496.8 C1059.9,499.8 1056.2,505.6 1049.8,509.6 C1043.4,513.6 1034.9,517.9 1026.8,521.1 C1018.7,524.3 1009.1,526.9 1001.2,528.8 C993.3,530.7 983.0,532.6 979.4,532.6 C975.8,532.6 973.6,530.7 979.4,528.8 C985.2,526.9 1004.0,524.7 1014.0,521.1 C1024.0,517.5 1035.3,511.1 1039.6,507.0 C1043.9,502.9 1040.9,500.2 1039.6,496.8 C1038.3,493.4 1029.8,489.4 1031.9,486.6 C1034.0,483.8 1045.8,483.2 1052.4,480.2 C1059.0,477.2 1068.2,471.2 1071.6,468.6 C1075.0,466.0 1071.2,470.1 1072.9,464.8Z" fill="#141c16" />
<path d="M641.5,197.0 C636.9,192.6 641.6,191.0 642.6,188.8 C643.6,186.7 645.1,185.4 647.3,184.1 C649.4,182.8 652.2,181.8 655.5,181.1 C658.8,180.4 663.4,180.1 667.3,180.0 C671.2,179.9 675.2,180.3 679.0,180.6 C682.8,180.9 684.7,181.2 690.0,181.8 C695.3,182.4 703.9,182.2 710.8,183.9 C717.7,185.6 724.7,189.4 731.6,192.2 C738.5,195.0 745.5,197.3 752.4,200.5 C759.3,203.7 767.0,207.7 773.2,211.6 C779.4,215.5 785.2,219.9 789.8,224.1 C794.4,228.2 797.7,232.1 800.9,236.5 C804.1,240.9 807.4,245.3 809.2,250.4 C811.1,255.5 811.5,261.9 812.0,267.0 C812.5,272.1 812.2,276.7 812.0,280.9 C811.8,285.1 813.4,289.3 810.6,292.0 C807.8,294.7 801.8,296.8 795.0,297.0 C788.2,297.2 776.4,295.5 770.0,293.0 C763.6,290.5 762.8,284.5 756.8,282.0 C750.8,279.5 740.1,278.5 733.7,278.0 C727.3,277.5 724.0,279.6 718.4,279.1 C712.8,278.6 704.7,279.9 700.0,275.0 C695.3,270.1 695.0,260.0 690.0,250.0 C685.0,240.0 678.1,223.8 670.0,215.0 C661.9,206.2 646.1,201.4 641.5,197.0Z" fill="#2c562c" stroke="#141c16" stroke-width="1.8"/>
<path d="M641.5,197.0 C636.9,192.6 641.6,191.0 642.6,188.8 C643.6,186.7 645.1,185.4 647.3,184.1 C649.4,182.8 652.2,181.8 655.5,181.1 C658.8,180.4 663.4,180.1 667.3,180.0 C671.2,179.9 675.2,180.3 679.0,180.6 C682.8,180.9 684.7,181.2 690.0,181.8 C695.3,182.4 703.9,182.2 710.8,183.9 C717.7,185.6 724.7,189.4 731.6,192.2 C738.5,195.0 745.5,197.3 752.4,200.5 C759.3,203.7 767.0,207.7 773.2,211.6 C779.4,215.5 785.2,219.9 789.8,224.1 C794.4,228.2 797.7,232.1 800.9,236.5 C804.1,240.9 807.4,245.3 809.2,250.4 C811.1,255.5 811.5,261.9 812.0,267.0 C812.5,272.1 812.2,276.7 812.0,280.9 C811.8,285.1 813.4,289.3 810.6,292.0 C807.8,294.7 801.8,296.8 795.0,297.0 C788.2,297.2 776.4,295.5 770.0,293.0 C763.6,290.5 762.8,284.5 756.8,282.0 C750.8,279.5 740.1,278.5 733.7,278.0 C727.3,277.5 724.0,279.6 718.4,279.1 C712.8,278.6 704.7,279.9 700.0,275.0 C695.3,270.1 695.0,260.0 690.0,250.0 C685.0,240.0 678.1,223.8 670.0,215.0 C661.9,206.2 646.1,201.4 641.5,197.0Z" fill="url(#pgb)" />
<path d="M690.0,181.8 C693.5,179.3 703.9,182.2 710.8,183.9 C717.7,185.6 724.7,189.4 731.6,192.2 C738.5,195.0 745.5,197.3 752.4,200.5 C759.3,203.7 767.0,207.7 773.2,211.6 C779.4,215.5 785.2,219.9 789.8,224.1 C794.4,228.2 797.7,232.1 800.9,236.5 C804.1,240.9 807.4,245.3 809.2,250.4 C811.1,255.5 811.5,261.9 812.0,267.0 C812.5,272.1 812.2,276.7 812.0,280.9 C811.8,285.1 813.4,289.7 810.6,292.0 C807.8,294.3 797.5,296.7 795.4,294.8 C793.3,292.9 797.6,285.5 798.1,280.9 C798.6,276.3 798.6,271.6 798.1,267.0 C797.6,262.4 798.2,258.1 795.4,253.2 C792.6,248.3 786.4,242.3 781.5,237.9 C776.6,233.5 772.3,230.5 766.3,226.8 C760.3,223.1 753.6,219.5 745.5,215.8 C737.4,212.1 727.0,207.5 717.7,204.7 C708.5,201.9 694.6,202.9 690.0,199.1 C685.4,195.3 686.5,184.3 690.0,181.8Z" fill="#3e913e" />
<path d="M690.0,181.8 C693.5,179.3 703.9,182.2 710.8,183.9 C717.7,185.6 724.7,189.4 731.6,192.2 C738.5,195.0 745.5,197.3 752.4,200.5 C759.3,203.7 767.0,207.7 773.2,211.6 C779.4,215.5 785.2,219.9 789.8,224.1 C794.4,228.2 797.7,232.1 800.9,236.5 C804.1,240.9 807.4,245.3 809.2,250.4 C811.1,255.5 811.5,261.9 812.0,267.0 C812.5,272.1 812.2,276.7 812.0,280.9 C811.8,285.1 813.4,289.7 810.6,292.0 C807.8,294.3 797.5,296.7 795.4,294.8 C793.3,292.9 797.6,285.5 798.1,280.9 C798.6,276.3 798.6,271.6 798.1,267.0 C797.6,262.4 798.2,258.1 795.4,253.2 C792.6,248.3 786.4,242.3 781.5,237.9 C776.6,233.5 772.3,230.5 766.3,226.8 C760.3,223.1 753.6,219.5 745.5,215.8 C737.4,212.1 727.0,207.5 717.7,204.7 C708.5,201.9 694.6,202.9 690.0,199.1 C685.4,195.3 686.5,184.3 690.0,181.8Z" fill="url(#pga)" />
<path d="M660.0,196.0 C664.3,196.0 680.4,197.7 690.0,199.1 C699.6,200.5 708.5,201.9 717.7,204.7 C727.0,207.5 737.4,212.1 745.5,215.8 C753.6,219.5 760.3,223.1 766.3,226.8 C772.3,230.5 779.3,235.5 781.5,237.9 C783.7,240.3 783.7,241.8 779.7,241.0 C775.7,240.2 764.6,235.6 757.3,233.0 C750.0,230.4 743.0,228.7 736.0,225.5 C729.0,222.3 722.7,217.4 715.0,214.0 C707.3,210.6 698.5,207.5 690.0,205.0 C681.5,202.5 669.0,200.5 664.0,199.0 C659.0,197.5 655.7,196.0 660.0,196.0Z" fill="#141c16" />
<path d="M656.0,183.0 C656.8,180.4 660.7,180.3 662.0,181.5 C663.3,182.7 664.0,187.2 664.0,190.0 C664.0,192.8 663.2,197.3 662.0,198.5 C660.8,199.7 658.0,199.6 657.0,197.0 C656.0,194.4 655.2,185.6 656.0,183.0Z" fill="#141c16" />
<path d="M703.0,300.0 C704.3,295.2 709.2,288.7 712.0,285.0 C714.8,281.3 716.0,278.8 720.0,277.6 C724.0,276.4 728.9,277.5 736.0,277.6 C743.1,277.7 755.3,278.3 762.6,278.1 C769.9,277.9 774.7,277.6 779.7,276.5 C784.7,275.4 789.3,273.5 792.5,271.2 C795.7,268.9 797.8,261.4 798.9,262.6 C800.0,263.8 799.6,273.6 798.9,278.6 C798.2,283.6 796.4,288.4 794.6,292.5 C792.8,296.6 791.8,300.9 788.2,303.2 C784.7,305.5 779.3,305.7 773.3,306.4 C767.3,307.1 758.4,306.8 752.0,307.4 C745.6,308.0 739.3,308.1 735.0,310.0 C730.7,311.9 727.4,315.1 726.1,318.7 C724.8,322.3 725.6,326.6 727.3,331.5 C729.0,336.4 736.7,346.5 736.3,348.2 C735.9,349.9 728.6,345.0 724.8,341.8 C721.0,338.6 716.7,333.7 713.3,329.0 C709.9,324.3 706.0,318.4 704.3,313.6 C702.6,308.8 701.7,304.8 703.0,300.0Z" fill="#141c16" />
<path d="M719.0,284.0 C722.9,283.0 734.4,282.0 741.3,281.8 C748.2,281.6 758.4,281.5 760.5,282.9 C762.6,284.3 756.8,287.7 754.1,290.4 C751.4,293.1 748.4,298.9 744.5,298.9 C740.6,298.9 735.1,292.2 730.7,290.4 C726.3,288.6 720.0,289.1 718.0,288.0 C716.0,286.9 715.1,285.0 719.0,284.0Z" fill="#2c562c" />
<path d="M719.0,284.0 C722.9,283.0 734.4,282.0 741.3,281.8 C748.2,281.6 758.4,281.5 760.5,282.9 C762.6,284.3 756.8,287.7 754.1,290.4 C751.4,293.1 748.4,298.9 744.5,298.9 C740.6,298.9 735.1,292.2 730.7,290.4 C726.3,288.6 720.0,289.1 718.0,288.0 C716.0,286.9 715.1,285.0 719.0,284.0Z" fill="url(#pgb)" />
<path d="M703.0,288.0 C700.9,287.9 693.6,296.3 690.2,299.5 C686.8,302.7 684.3,303.7 682.6,307.2 C680.9,310.7 680.9,315.4 680.0,320.7 C679.1,326.0 677.2,332.5 677.2,338.9 C677.2,345.2 678.2,352.5 680.0,358.8 C681.8,365.1 684.3,371.2 688.1,376.9 C691.9,382.6 696.6,388.1 702.6,393.2 C708.6,398.3 716.2,403.2 724.4,407.7 C732.6,412.2 742.5,416.8 751.6,420.4 C760.7,424.0 770.6,427.1 778.7,429.5 C786.9,431.9 793.9,433.8 800.5,434.9 C807.1,435.9 813.8,435.9 818.6,435.8 C823.4,435.7 826.5,435.4 829.5,434.0 C832.5,432.6 835.0,431.7 836.7,427.7 C838.5,423.7 838.4,417.8 840.0,410.0 C841.6,402.2 847.4,386.8 846.3,381.0 C845.2,375.2 839.9,377.3 833.5,375.0 C827.1,372.7 816.4,369.9 807.9,367.3 C799.4,364.8 790.8,361.8 782.3,359.7 C773.8,357.6 764.5,356.4 756.8,354.5 C749.1,352.6 741.6,350.3 736.3,348.2 C731.0,346.1 728.6,345.0 724.8,341.8 C721.0,338.6 716.7,333.7 713.3,329.0 C709.9,324.3 706.0,318.4 704.3,313.6 C702.6,308.8 703.2,304.3 703.0,300.0 C702.8,295.7 705.1,288.1 703.0,288.0Z" fill="#3e913e" />
<path d="M678.0,330.0 C676.9,330.9 676.9,334.1 677.2,338.9 C677.5,343.7 678.2,352.5 680.0,358.8 C681.8,365.1 684.3,371.2 688.1,376.9 C691.9,382.6 696.6,388.1 702.6,393.2 C708.6,398.3 716.2,403.2 724.4,407.7 C732.6,412.2 742.5,416.8 751.6,420.4 C760.7,424.0 770.6,427.1 778.7,429.5 C786.9,431.9 794.0,433.9 800.5,434.9 C807.0,435.9 815.1,435.5 818.0,435.5 C820.9,435.5 818.3,440.1 817.7,434.7 C817.1,429.3 817.1,410.6 814.5,403.2 C811.9,395.8 810.9,395.2 801.9,390.5 C792.9,385.8 775.5,380.5 760.8,374.7 C746.1,368.9 726.3,362.5 713.5,355.7 C700.7,348.9 689.9,338.0 684.0,333.7 C678.1,329.4 679.1,329.1 678.0,330.0Z" fill="#57b747" />
<path d="M703.0,288.0 C700.9,287.9 693.6,296.3 690.2,299.5 C686.8,302.7 684.3,303.7 682.6,307.2 C680.9,310.7 680.9,315.4 680.0,320.7 C679.1,326.0 677.2,332.5 677.2,338.9 C677.2,345.2 678.2,352.5 680.0,358.8 C681.8,365.1 684.3,371.2 688.1,376.9 C691.9,382.6 696.6,388.1 702.6,393.2 C708.6,398.3 716.2,403.2 724.4,407.7 C732.6,412.2 742.5,416.8 751.6,420.4 C760.7,424.0 770.6,427.1 778.7,429.5 C786.9,431.9 793.9,433.8 800.5,434.9 C807.1,435.9 813.8,435.9 818.6,435.8 C823.4,435.7 826.5,435.4 829.5,434.0 C832.5,432.6 835.0,431.7 836.7,427.7 C838.5,423.7 838.4,417.8 840.0,410.0 C841.6,402.2 847.4,386.8 846.3,381.0 C845.2,375.2 839.9,377.3 833.5,375.0 C827.1,372.7 816.4,369.9 807.9,367.3 C799.4,364.8 790.8,361.8 782.3,359.7 C773.8,357.6 764.5,356.4 756.8,354.5 C749.1,352.6 741.6,350.3 736.3,348.2 C731.0,346.1 728.6,345.0 724.8,341.8 C721.0,338.6 716.7,333.7 713.3,329.0 C709.9,324.3 706.0,318.4 704.3,313.6 C702.6,308.8 703.2,304.3 703.0,300.0 C702.8,295.7 705.1,288.1 703.0,288.0Z" fill="url(#pga)" />
<path d="M777.0,305.0 C782.7,303.9 799.8,306.4 810.7,309.3 C821.6,312.2 833.7,317.5 842.6,322.1 C851.5,326.7 858.7,330.7 864.0,337.0 C869.3,343.3 873.1,355.0 874.6,360.0 C876.1,365.0 874.4,365.7 873.0,367.0 C871.6,368.3 868.2,370.5 866.0,368.0 C863.8,365.5 863.6,357.2 859.7,352.0 C855.8,346.8 850.8,342.0 842.6,337.0 C834.4,332.0 821.7,325.7 810.7,322.1 C799.7,318.6 782.1,318.6 776.5,315.7 C770.9,312.8 771.3,306.1 777.0,305.0Z" fill="#3e913e" />
<path d="M790.0,313.0 C793.5,313.0 802.2,314.0 811.0,317.0 C819.8,320.0 834.8,326.5 843.0,331.0 C851.2,335.5 855.7,339.5 860.0,344.0 C864.3,348.5 867.5,354.3 869.0,358.0 C870.5,361.7 869.7,364.7 869.0,366.0 C868.3,367.3 866.5,368.0 865.0,366.0 C863.5,364.0 863.7,358.5 860.0,354.0 C856.3,349.5 851.2,344.2 843.0,339.0 C834.8,333.8 819.8,326.7 811.0,323.0 C802.2,319.3 793.5,318.7 790.0,317.0 C786.5,315.3 786.5,313.0 790.0,313.0Z" fill="#57b747" />
<path d="M947.0,338.0 C948.5,336.2 953.8,337.7 958.8,341.2 C963.8,344.7 970.7,352.4 976.7,359.1 C982.7,365.8 989.0,376.3 994.6,381.5 C1000.2,386.7 1002.5,388.1 1010.2,390.4 C1017.9,392.6 1033.2,393.1 1041.0,395.0 C1048.8,396.9 1056.7,400.0 1057.2,401.6 C1057.7,403.2 1051.6,404.1 1043.8,404.5 C1036.0,404.9 1021.4,405.9 1010.2,404.0 C999.0,402.1 985.3,397.8 976.7,393.0 C968.1,388.2 963.2,381.8 958.8,375.0 C954.3,368.2 952.0,358.2 950.0,352.0 C948.0,345.8 945.5,339.8 947.0,338.0Z" fill="#3e913e" />
<path d="M947.0,338.0 C948.5,336.2 953.8,337.7 958.8,341.2 C963.8,344.7 970.7,352.4 976.7,359.1 C982.7,365.8 989.0,376.3 994.6,381.5 C1000.2,386.7 1002.5,388.1 1010.2,390.4 C1017.9,392.6 1033.2,393.1 1041.0,395.0 C1048.8,396.9 1056.7,400.0 1057.2,401.6 C1057.7,403.2 1051.6,404.1 1043.8,404.5 C1036.0,404.9 1021.4,405.9 1010.2,404.0 C999.0,402.1 985.3,397.8 976.7,393.0 C968.1,388.2 963.2,381.8 958.8,375.0 C954.3,368.2 952.0,358.2 950.0,352.0 C948.0,345.8 945.5,339.8 947.0,338.0Z" fill="url(#pga)" />
<path d="M1012.0,391.0 C1009.7,389.0 1014.0,385.8 1016.0,384.0 C1018.0,382.2 1020.9,380.8 1024.0,380.4 C1027.2,380.0 1032.0,379.4 1034.9,381.5 C1037.8,383.6 1042.4,390.3 1041.6,392.7 C1040.8,395.1 1034.9,396.3 1030.0,396.0 C1025.1,395.7 1014.3,393.0 1012.0,391.0Z" fill="#c89272" />
<path d="M903.0,397.0 C903.7,392.0 907.8,391.2 912.0,391.0 C916.2,390.8 924.0,392.5 928.0,396.0 C932.0,399.5 934.7,405.8 936.0,412.0 C937.3,418.2 938.5,429.5 936.0,433.0 C933.5,436.5 925.7,435.0 921.0,433.0 C916.3,431.0 911.0,427.0 908.0,421.0 C905.0,415.0 902.3,402.0 903.0,397.0Z" fill="#1f3820" />
<path d="M772.0,318.0 C774.7,316.7 784.0,315.7 790.0,317.0 C796.0,318.3 803.0,321.8 808.0,326.0 C813.0,330.2 817.7,338.0 820.0,342.0 C822.3,346.0 824.3,350.3 822.0,350.0 C819.7,349.7 811.7,343.0 806.0,340.0 C800.3,337.0 793.3,334.5 788.0,332.0 C782.7,329.5 776.7,327.3 774.0,325.0 C771.3,322.7 769.3,319.3 772.0,318.0Z" fill="#141c16" />
<path d="M846.9,381.5 C851.6,374.8 858.1,370.6 864.8,368.0 C871.5,365.4 881.2,365.1 887.1,365.8 C893.0,366.5 898.2,368.0 900.0,372.0 C901.8,376.0 897.7,382.8 898.0,390.0 C898.3,397.2 899.3,408.3 902.0,415.0 C904.7,421.7 908.3,426.5 914.0,430.0 C919.7,433.5 925.5,436.6 936.0,436.0 C946.5,435.4 964.3,429.7 976.7,426.2 C989.1,422.7 999.0,418.4 1010.2,415.0 C1021.4,411.6 1034.5,407.2 1043.8,406.1 C1053.1,405.0 1060.6,406.8 1066.2,408.3 C1071.8,409.8 1078.0,411.8 1077.4,415.0 C1076.8,418.2 1071.0,423.2 1062.6,427.7 C1054.2,432.2 1039.2,437.3 1026.8,441.8 C1014.4,446.3 999.1,451.2 988.4,454.6 C977.7,458.0 962.8,459.0 962.8,462.2 C962.8,465.4 980.9,470.4 988.4,473.8 C995.9,477.2 1000.8,480.6 1007.6,482.7 C1014.4,484.8 1024.1,484.2 1029.4,486.6 C1034.7,489.0 1038.3,493.8 1039.6,496.8 C1040.9,499.8 1039.1,501.9 1037.0,504.5 C1034.9,507.1 1032.8,509.4 1026.8,512.2 C1020.8,515.0 1009.1,518.6 1001.2,521.1 C993.3,523.6 985.4,525.9 979.4,527.5 C973.4,529.1 971.5,530.2 965.5,530.5 C959.5,530.8 952.4,530.9 943.1,529.2 C933.8,527.5 920.7,524.3 909.5,520.2 C898.3,516.1 885.7,510.9 876.0,504.6 C866.3,498.3 857.6,489.7 851.3,482.2 C844.9,474.7 840.9,467.6 837.9,459.8 C834.9,452.0 833.6,443.8 833.4,435.2 C833.2,426.6 834.5,417.2 836.8,408.3 C839.0,399.4 842.2,388.2 846.9,381.5Z" fill="#3e913e" />
<path d="M834.0,440.0 C834.3,446.6 835.0,452.8 837.9,459.8 C840.8,466.8 844.9,474.7 851.3,482.2 C857.6,489.7 866.3,498.3 876.0,504.6 C885.7,510.9 898.3,516.1 909.5,520.2 C920.7,524.3 933.8,527.3 943.1,529.2 C952.4,531.1 959.5,531.4 965.5,531.4 C971.5,531.4 978.9,535.1 979.0,529.5 C979.1,523.9 976.0,508.4 966.0,497.9 C956.0,487.4 934.5,476.8 918.7,466.3 C902.9,455.8 884.1,445.2 871.3,434.7 C858.5,424.2 847.8,405.6 841.9,403.2 C836.0,400.8 837.3,413.9 836.0,420.0 C834.7,426.1 833.7,433.4 834.0,440.0Z" fill="#57b747" />
<path d="M846.9,381.5 C851.6,374.8 858.1,370.6 864.8,368.0 C871.5,365.4 881.2,365.1 887.1,365.8 C893.0,366.5 898.2,368.0 900.0,372.0 C901.8,376.0 897.7,382.8 898.0,390.0 C898.3,397.2 899.3,408.3 902.0,415.0 C904.7,421.7 908.3,426.5 914.0,430.0 C919.7,433.5 925.5,436.6 936.0,436.0 C946.5,435.4 964.3,429.7 976.7,426.2 C989.1,422.7 999.0,418.4 1010.2,415.0 C1021.4,411.6 1034.5,407.2 1043.8,406.1 C1053.1,405.0 1060.6,406.8 1066.2,408.3 C1071.8,409.8 1078.0,411.8 1077.4,415.0 C1076.8,418.2 1071.0,423.2 1062.6,427.7 C1054.2,432.2 1039.2,437.3 1026.8,441.8 C1014.4,446.3 999.1,451.2 988.4,454.6 C977.7,458.0 962.8,459.0 962.8,462.2 C962.8,465.4 980.9,470.4 988.4,473.8 C995.9,477.2 1000.8,480.6 1007.6,482.7 C1014.4,484.8 1024.1,484.2 1029.4,486.6 C1034.7,489.0 1038.3,493.8 1039.6,496.8 C1040.9,499.8 1039.1,501.9 1037.0,504.5 C1034.9,507.1 1032.8,509.4 1026.8,512.2 C1020.8,515.0 1009.1,518.6 1001.2,521.1 C993.3,523.6 985.4,525.9 979.4,527.5 C973.4,529.1 971.5,530.2 965.5,530.5 C959.5,530.8 952.4,530.9 943.1,529.2 C933.8,527.5 920.7,524.3 909.5,520.2 C898.3,516.1 885.7,510.9 876.0,504.6 C866.3,498.3 857.6,489.7 851.3,482.2 C844.9,474.7 840.9,467.6 837.9,459.8 C834.9,452.0 833.6,443.8 833.4,435.2 C833.2,426.6 834.5,417.2 836.8,408.3 C839.0,399.4 842.2,388.2 846.9,381.5Z" fill="url(#pga)" />
<path d="M836,440 C836,420 842,398 852,384 C862,372 878,365 895,364 C905,364 912,366 918,369" fill="none" stroke="#15241a" stroke-width="1.6"/>
<path d="M977.6,530.7 C980.8,532.6 972.9,538.7 971.8,544.1 C970.7,549.5 969.9,557.2 970.9,563.3 C971.9,569.4 974.6,575.1 977.6,580.6 C980.6,586.1 986.4,590.2 989.1,596.0 C991.8,601.8 993.4,608.8 993.9,615.2 C994.4,621.6 993.4,628.3 992.0,634.4 C990.6,640.5 988.0,646.8 985.3,651.6 C982.6,656.4 977.5,661.2 975.7,663.1 C973.9,665.0 973.8,665.7 974.7,663.1 C975.7,660.5 979.3,653.2 981.4,647.8 C983.5,642.4 985.9,636.6 987.2,630.5 C988.5,624.4 990.1,617.0 989.1,611.3 C988.1,605.5 985.6,601.8 981.4,596.0 C977.2,590.2 968.4,583.8 964.1,576.8 C959.8,569.8 957.4,561.1 955.5,553.7 C953.6,546.3 948.9,536.4 952.6,532.6 C956.3,528.8 974.4,528.8 977.6,530.7Z" fill="#c89272" stroke="#141c16" stroke-width="1.5"/>
<path d="M953,532 C954,556 962,578 980,596 C990,608 989,630 975,663" fill="none" stroke="#141c16" stroke-width="2.2"/>
<path d="M582.8,226.3 C583.0,223.0 584.8,218.4 586.4,215.7 C588.0,213.0 589.5,211.8 592.2,209.9 C594.9,208.0 599.7,205.7 602.8,204.0 C605.9,202.3 608.1,200.9 611.0,199.9 C613.9,198.9 616.9,198.5 620.4,198.1 C623.9,197.7 628.6,197.7 632.1,197.6 C635.6,197.5 637.7,196.9 641.5,197.5 C645.3,198.1 650.8,199.2 655.0,201.0 C659.2,202.8 662.0,205.7 667.0,208.0 C672.0,210.3 679.5,213.2 685.0,215.0 C690.5,216.8 694.5,217.7 700.0,219.0 C705.5,220.3 712.9,220.0 717.7,222.7 C722.5,225.4 726.2,230.6 728.8,235.2 C731.3,239.8 732.8,245.6 733.0,250.4 C733.2,255.2 732.8,260.6 730.2,264.3 C727.7,268.0 722.7,270.9 717.7,272.6 C712.7,274.3 705.5,274.5 700.0,274.4 C694.5,274.3 690.4,273.0 684.9,272.0 C679.4,271.0 674.1,269.9 667.3,268.5 C660.4,267.1 650.6,265.4 643.8,263.8 C636.9,262.2 632.1,260.7 626.2,259.1 C620.3,257.5 613.5,256.0 608.6,254.4 C603.7,252.8 600.0,251.6 596.9,249.7 C593.8,247.8 591.8,245.0 589.9,242.7 C588.0,240.4 586.4,238.4 585.2,235.7 C584.0,233.0 582.6,229.6 582.8,226.3Z" fill="#4ea444" stroke="#141c16" stroke-width="1.8"/>
<path d="M586.4,215.7 C587.2,214.5 589.5,211.8 592.2,209.9 C594.9,208.0 599.7,205.7 602.8,204.0 C605.9,202.3 608.1,200.9 611.0,199.9 C613.9,198.9 616.9,198.5 620.4,198.1 C623.9,197.7 628.6,197.7 632.1,197.6 C635.6,197.5 637.7,196.9 641.5,197.5 C645.3,198.1 650.7,199.1 655.0,201.0 C659.3,202.9 667.2,207.6 667.3,208.7 C667.4,209.8 659.4,207.7 655.5,207.5 C651.6,207.3 647.7,207.7 643.8,207.5 C639.9,207.3 636.0,206.2 632.1,206.4 C628.2,206.6 624.3,207.5 620.4,208.7 C616.5,209.9 612.5,212.2 608.6,213.4 C604.7,214.6 600.4,215.1 596.9,215.7 C593.4,216.3 589.2,216.9 587.5,216.9 C585.8,216.9 585.6,216.9 586.4,215.7Z" fill="#57b747" />
<path d="M586.0,236.0 C587.7,235.6 594.3,238.5 600.0,240.0 C605.7,241.5 612.7,243.5 620.0,245.0 C627.3,246.5 636.0,247.8 643.8,249.0 C651.6,250.2 659.3,251.2 667.0,252.0 C674.7,252.8 684.2,254.5 690.0,254.0 C695.8,253.5 700.5,248.8 702.0,249.0 C703.5,249.2 702.7,252.0 698.9,255.0 C695.1,258.0 684.3,264.9 679.0,267.2 C673.7,269.4 673.2,269.1 667.3,268.5 C661.4,267.9 650.6,265.4 643.8,263.8 C636.9,262.2 632.1,260.7 626.2,259.1 C620.3,257.5 613.5,256.0 608.6,254.4 C603.7,252.8 600.0,251.6 596.9,249.7 C593.8,247.8 591.7,245.0 589.9,242.7 C588.1,240.4 584.3,236.4 586.0,236.0Z" fill="#57b747" />
<path d="M582.8,226.3 C583.0,223.0 584.8,218.4 586.4,215.7 C588.0,213.0 589.5,211.8 592.2,209.9 C594.9,208.0 599.7,205.7 602.8,204.0 C605.9,202.3 608.1,200.9 611.0,199.9 C613.9,198.9 616.9,198.5 620.4,198.1 C623.9,197.7 628.6,197.7 632.1,197.6 C635.6,197.5 637.7,196.9 641.5,197.5 C645.3,198.1 650.8,199.2 655.0,201.0 C659.2,202.8 662.0,205.7 667.0,208.0 C672.0,210.3 679.5,213.2 685.0,215.0 C690.5,216.8 694.5,217.7 700.0,219.0 C705.5,220.3 712.9,220.0 717.7,222.7 C722.5,225.4 726.2,230.6 728.8,235.2 C731.3,239.8 732.8,245.6 733.0,250.4 C733.2,255.2 732.8,260.6 730.2,264.3 C727.7,268.0 722.7,270.9 717.7,272.6 C712.7,274.3 705.5,274.5 700.0,274.4 C694.5,274.3 690.4,273.0 684.9,272.0 C679.4,271.0 674.1,269.9 667.3,268.5 C660.4,267.1 650.6,265.4 643.8,263.8 C636.9,262.2 632.1,260.7 626.2,259.1 C620.3,257.5 613.5,256.0 608.6,254.4 C603.7,252.8 600.0,251.6 596.9,249.7 C593.8,247.8 591.8,245.0 589.9,242.7 C588.0,240.4 586.4,238.4 585.2,235.7 C584.0,233.0 582.6,229.6 582.8,226.3Z" fill="url(#pga)" />
<path d="M588,218 C600,217 612,213 625,210 C640,208 655,210 667,209" fill="none" stroke="#2a5a2a" stroke-width="2.2"/>
<path d="M586,236 C610,242 650,252 700,256" fill="none" stroke="#2a5a2a" stroke-width="1.2"/>
<ellipse cx="642" cy="232" rx="9" ry="8.5" fill="#1f3a20"/>
<ellipse cx="642" cy="232" rx="7" ry="7.5" fill="#e6dc1e"/>
<ellipse cx="642" cy="232" rx="1.2" ry="5.5" fill="#202010"/>
<path d="M586,235 C575,233 566,235 561,240 C558,243 559,246 563,246.5 C566,247 568,245 566,243.5 C570,239 577,238 586,238 Z" fill="#8a2030" stroke="#141c16" stroke-width="0.8"/></g></svg>
</body></html>
